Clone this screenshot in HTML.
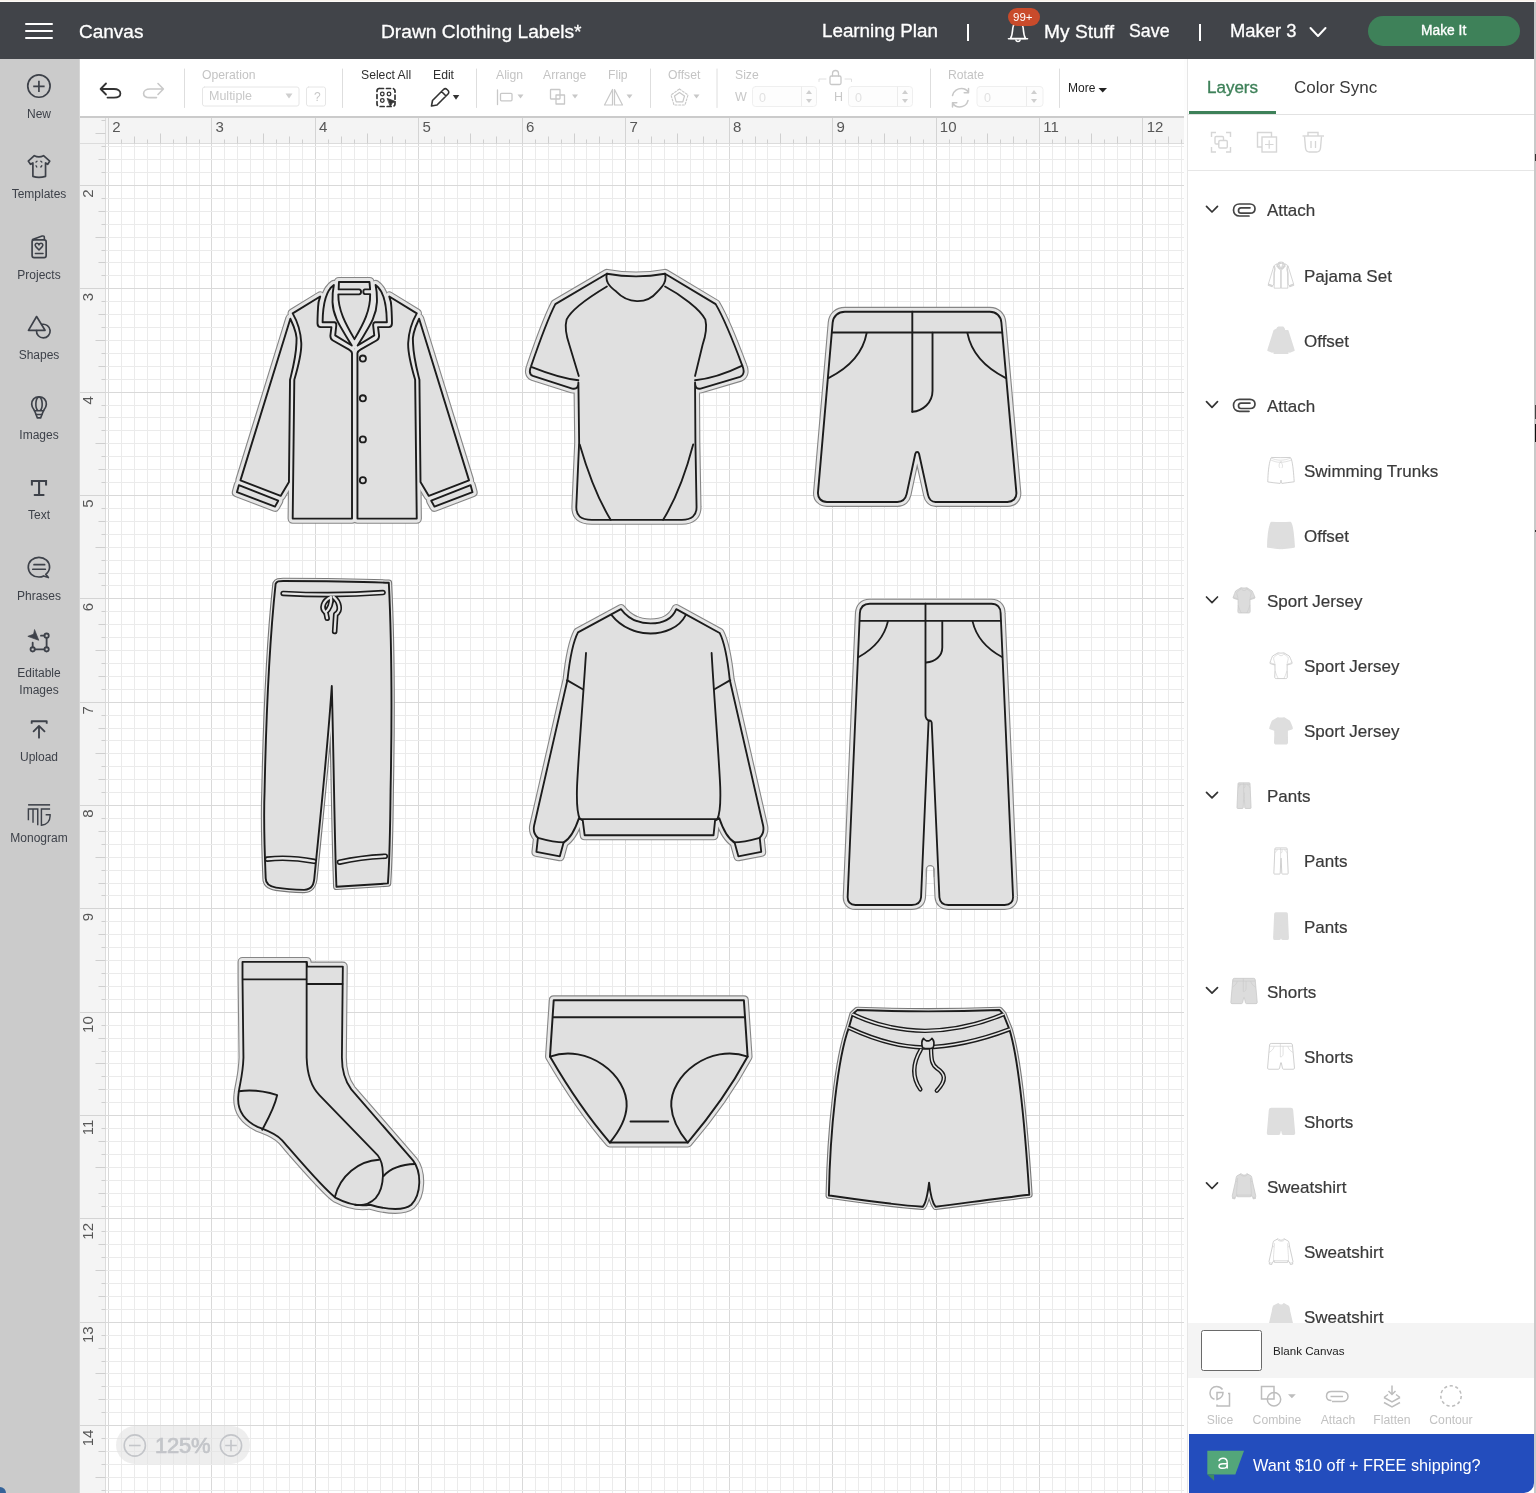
<!DOCTYPE html>
<html><head><meta charset="utf-8"><title>Canvas</title>
<style>
html,body{margin:0;padding:0;}
body{width:1536px;height:1493px;position:relative;overflow:hidden;background:#f8f3ec;font-family:"Liberation Sans",sans-serif;}
.a{position:absolute;}
.t{position:absolute;white-space:pre;will-change:transform;}
svg{position:absolute;overflow:visible;will-change:transform;}
</style></head><body>
<div class="a" style="left:0;top:1px;width:1536px;height:1px;background:#fdfbf8"></div><div class="a" style="left:0;top:2px;width:1534px;height:57.3px;background:#414449"></div><div class="a" style="left:1534px;top:2px;width:2px;height:1491px;background:#c9c9c9"></div><div class="a" style="left:25.4px;top:23.1px;width:27.3px;height:2px;border-radius:1px;background:#fff"></div><div class="a" style="left:25.4px;top:30.0px;width:27.3px;height:2px;border-radius:1px;background:#fff"></div><div class="a" style="left:25.4px;top:37.0px;width:27.3px;height:2px;border-radius:1px;background:#fff"></div><div class="t" style="left:79.0px;top:21.9px;font-size:19px;line-height:19px;color:#fff;font-weight:400;-webkit-text-stroke:0.3px #fff">Canvas</div>
<div class="t" style="left:380.5px;top:21.9px;font-size:19.2px;line-height:19.2px;color:#fff;font-weight:400;-webkit-text-stroke:0.3px #fff">Drawn Clothing Labels*</div>
<div class="t" style="left:822.2px;top:22.4px;font-size:18.8px;line-height:18.8px;color:#fff;font-weight:400;-webkit-text-stroke:0.3px #fff">Learning Plan</div>
<div class="a" style="left:967.4px;top:23.5px;width:2px;height:17.5px;background:#fff"></div><div class="a" style="left:1199.1px;top:23.5px;width:2px;height:17.5px;background:#fff"></div><svg style="left:1005px;top:18px" width="26" height="28" viewBox="0 0 26 28">
<path d="M5.5 20.5 C7.5 17 7.5 13 7.8 10 C8.3 6.5 10.5 4.5 13 4.5 C15.5 4.5 17.7 6.5 18.2 10 C18.5 13 18.5 17 20.5 20.5 Z" fill="none" stroke="#fff" stroke-width="1.6" stroke-linejoin="round"/>
<path d="M3.5 20.8 H22.5" stroke="#fff" stroke-width="1.6" stroke-linecap="round"/>
<path d="M10.8 21.5 C11 24 15 24 15.2 21.5" fill="none" stroke="#fff" stroke-width="1.5"/>
</svg><div class="a" style="left:1007.5px;top:8.1px;width:32px;height:18px;border-radius:9px;background:#c94b2b"></div><div class="t" style="left:1012.5px;top:11.9px;font-size:11.5px;line-height:11.5px;color:#fff;font-weight:400;">99+</div>
<div class="t" style="left:1044.3px;top:21.7px;font-size:19.2px;line-height:19.2px;color:#fff;font-weight:400;-webkit-text-stroke:0.3px #fff">My Stuff</div>
<div class="t" style="left:1128.7px;top:22.9px;font-size:17.8px;line-height:17.8px;color:#fff;font-weight:400;-webkit-text-stroke:0.3px #fff">Save</div>
<div class="t" style="left:1229.5px;top:22.2px;font-size:18.4px;line-height:18.4px;color:#fff;font-weight:400;-webkit-text-stroke:0.3px #fff">Maker 3</div>
<svg style="left:1308px;top:25px" width="20" height="14" viewBox="0 0 20 14"><path d="M2.5 3 L10 11 L17.5 3" fill="none" stroke="#fff" stroke-width="2" stroke-linecap="round" stroke-linejoin="round"/></svg><div class="a" style="left:1368px;top:15.8px;width:152px;height:30px;border-radius:15px;background:#3e8159"></div><div class="t" style="left:1420.8px;top:24.3px;font-size:13.8px;line-height:13.8px;color:#fff;font-weight:400;-webkit-text-stroke:0.35px #fff">Make It</div>
<div class="a" style="left:0;top:59px;width:79px;height:1434px;background:#cbcbcb"></div><div class="a" style="left:79px;top:59px;width:1px;height:1434px;background:#d6d6d6"></div><svg style="left:14px;top:66px" width="50" height="60" viewBox="0 0 1244 1493" fill="none" stroke="#3d4149" stroke-linecap="round" stroke-linejoin="round"><circle cx="620" cy="500" r="278" stroke-width="42"/><path d="M478 508 H762 M620 365 V645" stroke-width="42" stroke-linecap="butt"/></svg>
<div class="t" style="left:-21.0px;width:120px;text-align:center;top:107.8px;font-size:12px;line-height:12px;color:#3d4149;font-weight:400">New</div>

<svg style="left:14px;top:146px" width="50" height="60" viewBox="0 0 1244 1493" fill="none" stroke="#3d4149" stroke-linecap="round" stroke-linejoin="round"><path d="M505 240 C570 272 670 272 735 240 L890 375 L840 455 L785 420 V755 C690 785 550 785 470 755 V420 L410 455 L355 375 Z" stroke-width="42"/><path d="M548 398 L572 380 M668 380 L692 398 M548 492 L566 522 M692 492 L668 522" stroke-width="34"/></svg>
<div class="t" style="left:-21.0px;width:120px;text-align:center;top:188.3px;font-size:12px;line-height:12px;color:#3d4149;font-weight:400">Templates</div>

<svg style="left:14px;top:226px" width="50" height="60" viewBox="0 0 1244 1493" fill="none" stroke="#3d4149" stroke-linecap="round" stroke-linejoin="round"><rect x="450" y="345" width="350" height="440" rx="50" stroke-width="42"/><path d="M460 335 L700 250 C735 240 755 258 755 290 V335" stroke-width="40"/><path d="M622 595 L548 520 C508 478 528 432 572 432 C600 432 614 452 622 470 C630 452 644 432 672 432 C716 432 736 478 696 520 Z" stroke-width="38"/><path d="M532 685 H722" stroke-width="38"/></svg>
<div class="t" style="left:-21.0px;width:120px;text-align:center;top:268.5px;font-size:12px;line-height:12px;color:#3d4149;font-weight:400">Projects</div>

<svg style="left:14px;top:306px" width="50" height="60" viewBox="0 0 1244 1493" fill="none" stroke="#3d4149" stroke-linecap="round" stroke-linejoin="round"><path d="M562 262 L360 605 H772 Z" stroke-width="42"/><path d="M698 458 A170 170 0 1 1 560 612" stroke-width="42"/></svg>
<div class="t" style="left:-21.0px;width:120px;text-align:center;top:348.8px;font-size:12px;line-height:12px;color:#3d4149;font-weight:400">Shapes</div>

<svg style="left:14px;top:386px" width="50" height="60" viewBox="0 0 1244 1493" fill="none" stroke="#3d4149" stroke-linecap="round" stroke-linejoin="round"><path d="M622 268 C510 268 440 350 440 455 C440 525 480 570 510 610 L582 795 H662 L735 610 C765 570 805 525 805 455 C805 350 735 268 622 268 Z" stroke-width="42"/><path d="M610 275 C530 320 520 540 595 612 M635 275 C715 320 725 540 650 612 M505 615 H740 M552 710 H692" stroke-width="40"/></svg>
<div class="t" style="left:-21.0px;width:120px;text-align:center;top:429.1px;font-size:12px;line-height:12px;color:#3d4149;font-weight:400">Images</div>

<svg style="left:14px;top:466px" width="50" height="60" viewBox="0 0 1244 1493" fill="none" stroke="#3d4149" stroke-linecap="round" stroke-linejoin="round"><path d="M445 488 V372 H798 V488" stroke-width="50" stroke-linecap="butt" stroke-linejoin="miter"/><path d="M624 372 V722" stroke-width="52" stroke-linecap="butt"/><path d="M512 722 H738" stroke-width="46"/></svg>
<div class="t" style="left:-21.0px;width:120px;text-align:center;top:509.4px;font-size:12px;line-height:12px;color:#3d4149;font-weight:400">Text</div>

<svg style="left:14px;top:546px" width="50" height="60" viewBox="0 0 1244 1493" fill="none" stroke="#3d4149" stroke-linecap="round" stroke-linejoin="round"><path d="M790 705 C850 655 885 595 885 528 C885 385 768 285 620 285 C472 285 355 385 355 528 C355 670 472 772 620 772 C665 772 705 762 738 745 L855 785 Z" stroke-width="42"/><path d="M498 465 H762 M468 578 H780" stroke-width="42"/></svg>
<div class="t" style="left:-21.0px;width:120px;text-align:center;top:590.4px;font-size:12px;line-height:12px;color:#3d4149;font-weight:400">Phrases</div>

<svg style="left:4px;top:620px" width="70" height="80" viewBox="0 0 1306 1493" fill="none" stroke="#3d4149" stroke-linecap="round" stroke-linejoin="round"><path d="M572 185 L648 378 L445 305 L548 268 Z" fill="#3d4149" stroke-width="14"/><path d="M535 425 V510 M573 548 H755 M795 330 V510 M690 292 H755" stroke-width="34"/><circle cx="535" cy="548" r="40" stroke-width="34"/><circle cx="795" cy="548" r="40" stroke-width="34"/><circle cx="795" cy="292" r="40" stroke-width="34"/></svg>
<div class="t" style="left:-21.0px;width:120px;text-align:center;top:666.8px;font-size:12px;line-height:12px;color:#3d4149;font-weight:400">Editable</div>

<div class="t" style="left:-21.0px;width:120px;text-align:center;top:684.3px;font-size:12px;line-height:12px;color:#3d4149;font-weight:400">Images</div>

<svg style="left:4px;top:706px" width="70" height="144" viewBox="0 0 726 1493" fill="none" stroke="#3d4149" stroke-linecap="round" stroke-linejoin="round"><path d="M287 185 V158 H443 V185" stroke-width="19" stroke-linecap="butt"/><path d="M363 328 V210 M307 262 L363 206 L420 262" stroke-width="19"/></svg>
<div class="t" style="left:-21.0px;width:120px;text-align:center;top:750.8px;font-size:12px;line-height:12px;color:#3d4149;font-weight:400">Upload</div>

<svg style="left:4px;top:706px" width="70" height="144" viewBox="0 0 726 1493" fill="none" stroke="#3d4149" stroke-linecap="round" stroke-linejoin="round"><path d="M250 1025 H478" stroke-width="16" stroke-linecap="butt"/><path d="M253 1185 V1068 H350 V1236 M301 1068 V1210" stroke-width="15" stroke-linecap="butt" stroke-linejoin="miter"/><path d="M478 1068 H388 V1236 C445 1230 478 1190 478 1140 V1128 H432" stroke-width="15" stroke-linecap="butt" stroke-linejoin="miter"/></svg>
<div class="t" style="left:-21.0px;width:120px;text-align:center;top:831.5px;font-size:12px;line-height:12px;color:#3d4149;font-weight:400">Monogram</div>
<div class="a" style="left:80px;top:59px;width:1107px;height:57px;background:#fff"></div><div class="a" style="left:80px;top:116px;width:1104px;height:2px;background:#cbcbcb"></div><svg style="left:0;top:0" width="1536" height="130" viewBox="0 0 1536 130" fill="none" stroke-linecap="round" stroke-linejoin="round">
<path d="M106 83.5 L100.6 89 L106 94.5 M100.6 89 H114 C118 89 120.4 91 120.4 93.4 C120.4 96 118 97.6 114 97.6 H107.5" stroke="#333" stroke-width="1.8"/>
<path d="M158 83.5 L163.4 89 L158 94.5 M163.4 89 H150 C146 89 143.6 91 143.6 93.4 C143.6 96 146 97.6 150 97.6 H156.5" stroke="#c9c9c9" stroke-width="1.6"/>

<line x1="184.5" y1="69" x2="184.5" y2="107.5" stroke="#dedede" stroke-width="1"/>
<line x1="342.5" y1="69" x2="342.5" y2="107.5" stroke="#dedede" stroke-width="1"/>
<line x1="476.5" y1="69" x2="476.5" y2="107.5" stroke="#dedede" stroke-width="1"/>
<line x1="650.5" y1="69" x2="650.5" y2="107.5" stroke="#dedede" stroke-width="1"/>
<line x1="717" y1="69" x2="717" y2="107.5" stroke="#dedede" stroke-width="1"/>
<line x1="930.5" y1="69" x2="930.5" y2="107.5" stroke="#dedede" stroke-width="1"/>
<line x1="1059.5" y1="69" x2="1059.5" y2="107.5" stroke="#dedede" stroke-width="1"/>
<rect x="202.5" y="87" width="96.5" height="19" rx="2" stroke="#e6e6e6" stroke-width="1"/>
<path d="M285.5 93.5 H292.5 L289 98.5 Z" fill="#cfcfcf" stroke="none"/>
<rect x="306.5" y="87" width="19" height="19" rx="2" stroke="#e6e6e6" stroke-width="1"/>
<rect x="377" y="88.5" width="18" height="18" rx="2.5" stroke="#333" stroke-width="1.7" stroke-dasharray="4 3"/>
<circle cx="382.3" cy="94" r="1.8" stroke="#333" stroke-width="1.3"/><circle cx="389" cy="94" r="1.8" stroke="#333" stroke-width="1.3"/><circle cx="382.3" cy="100.5" r="1.8" stroke="#333" stroke-width="1.3"/>
<path d="M387.5 98.5 L395.5 101.5 L392 103 L390.5 106.5 Z" fill="#333" stroke="#333" stroke-width="0.8"/>
<path d="M431.5 106 L432.5 100.5 L443.5 89.5 C444.5 88.5 446 88.5 447 89.5 L448 90.5 C449 91.5 449 93 448 94 L437 105 Z M441.5 91.5 L446 96" stroke="#333" stroke-width="1.6"/>
<path d="M452.8 95 H459.3 L456 99.8 Z" fill="#333" stroke="none"/>
<path d="M497.5 90 V104.5" stroke="#c8c8c8" stroke-width="1.3"/><rect x="500.5" y="93.3" width="11.5" height="7.5" rx="1" stroke="#c8c8c8" stroke-width="1.3"/><path d="M517.5 94.5 H523.5 L520.5 98.5 Z" fill="#c8c8c8" stroke="none"/>
<rect x="550.5" y="89.5" width="9.5" height="9.5" rx="0.5" stroke="#c8c8c8" stroke-width="1.3"/><path d="M556 95 H564.5 V104 H556 Z" stroke="#c8c8c8" stroke-width="1.3"/><path d="M572 94.5 H578 L575 98.5 Z" fill="#c8c8c8" stroke="none"/>
<path d="M604.5 105 L612.5 89.5 V105 Z M614.5 89.5 L622.5 105 H614.5 Z" stroke="#c8c8c8" stroke-width="1.2"/><path d="M626.5 94.5 H632.5 L629.5 98.5 Z" fill="#c8c8c8" stroke="none"/>
<path d="M679.5 89 L688 95 L685 105 H674 L671 95 Z" stroke="#c8c8c8" stroke-width="1.1" stroke-dasharray="2 1.6"/><path d="M679.5 92.5 L684.5 96 L682.8 101.8 H676.2 L674.5 96 Z" stroke="#c8c8c8" stroke-width="1.2"/><path d="M693.5 94.5 H699.5 L696.5 98.5 Z" fill="#c8c8c8" stroke="none"/>
<rect x="752.5" y="86.5" width="64" height="20" rx="3" stroke="#efefef" stroke-width="1" fill="#fdfdfd"/>
<line x1="801.5" y1="87" x2="801.5" y2="106" stroke="#ececec" stroke-width="1"/>
<path d="M806.0 94 L809.0 90 L812.0 94 Z M806.0 99 L809.0 103 L812.0 99 Z" fill="#cfcfcf" stroke="none"/>
<rect x="848.5" y="86.5" width="64" height="20" rx="3" stroke="#efefef" stroke-width="1" fill="#fdfdfd"/>
<line x1="897.5" y1="87" x2="897.5" y2="106" stroke="#ececec" stroke-width="1"/>
<path d="M902.0 94 L905.0 90 L908.0 94 Z M902.0 99 L905.0 103 L908.0 99 Z" fill="#cfcfcf" stroke="none"/>
<rect x="977" y="86.5" width="66" height="20" rx="3" stroke="#efefef" stroke-width="1" fill="#fdfdfd"/><line x1="1026.5" y1="87" x2="1026.5" y2="106" stroke="#ececec" stroke-width="1"/><path d="M1031 94 L1034 90 L1037 94 Z M1031 99 L1034 103 L1037 99 Z" fill="#cfcfcf" stroke="none"/>
<rect x="830" y="76" width="11" height="8.5" rx="1.5" stroke="#c8c8c8" stroke-width="1.3"/><path d="M832.5 76 V73.5 C832.5 71.5 834 70.5 835.5 70.5 C837 70.5 838.5 71.5 838.5 73.5 V76" stroke="#c8c8c8" stroke-width="1.3"/><path d="M819 81.5 V79 H826 M845 79 H851.5 V81.5" stroke="#e0e0e0" stroke-width="1"/>
<path d="M952.5 95.5 C953.5 90.5 958 88.5 961.5 88.5 C964.5 88.5 967 90 968.5 92.5 M968.5 88.5 V92.8 H964.2 M968 100.5 C967 105 963 107 959.5 107 C956.5 107 954 105.5 952.5 103 M952.5 107 V102.7 H956.8" stroke="#c8c8c8" stroke-width="1.5"/>
<path d="M1098.5 88 H1107 L1102.7 92.6 Z" fill="#222" stroke="none"/>
</svg>
<div class="t" style="left:202.0px;top:69.3px;font-size:12.2px;line-height:12.2px;color:#c4c4c4;font-weight:400;">Operation</div>

<div class="t" style="left:360.5px;top:69.3px;font-size:12.2px;line-height:12.2px;color:#2f2f2f;font-weight:400;">Select All</div>

<div class="t" style="left:433.0px;top:69.3px;font-size:12.2px;line-height:12.2px;color:#2f2f2f;font-weight:400;">Edit</div>

<div class="t" style="left:496.0px;top:69.3px;font-size:12.2px;line-height:12.2px;color:#c4c4c4;font-weight:400;">Align</div>

<div class="t" style="left:542.5px;top:69.3px;font-size:12.2px;line-height:12.2px;color:#c4c4c4;font-weight:400;">Arrange</div>

<div class="t" style="left:607.5px;top:69.3px;font-size:12.2px;line-height:12.2px;color:#c4c4c4;font-weight:400;">Flip</div>

<div class="t" style="left:668.0px;top:69.3px;font-size:12.2px;line-height:12.2px;color:#c4c4c4;font-weight:400;">Offset</div>

<div class="t" style="left:734.5px;top:69.3px;font-size:12.2px;line-height:12.2px;color:#c4c4c4;font-weight:400;">Size</div>

<div class="t" style="left:948.0px;top:69.3px;font-size:12.2px;line-height:12.2px;color:#c4c4c4;font-weight:400;">Rotate</div>

<div class="t" style="left:209.0px;top:90.2px;font-size:12.5px;line-height:12.5px;color:#c8c8c8;font-weight:400;">Multiple</div>

<div class="t" style="left:313.5px;top:90.6px;font-size:12px;line-height:12px;color:#c8c8c8;font-weight:400;">?</div>

<div class="t" style="left:735.0px;top:91.4px;font-size:12.5px;line-height:12.5px;color:#c8c8c8;font-weight:400;">W</div>

<div class="t" style="left:834.0px;top:91.4px;font-size:12.5px;line-height:12.5px;color:#c8c8c8;font-weight:400;">H</div>

<div class="t" style="left:759.0px;top:91.7px;font-size:12.5px;line-height:12.5px;color:#e2e2e2;font-weight:400;">0</div>

<div class="t" style="left:855.0px;top:91.7px;font-size:12.5px;line-height:12.5px;color:#e2e2e2;font-weight:400;">0</div>

<div class="t" style="left:984.0px;top:91.7px;font-size:12.5px;line-height:12.5px;color:#e2e2e2;font-weight:400;">0</div>

<div class="t" style="left:1067.5px;top:82.3px;font-size:12px;line-height:12px;color:#222;font-weight:400;">More</div>
<div class="a" style="left:80px;top:118px;width:1104px;height:1375px;background:#fff"></div>
<svg style="left:0;top:0" width="1536" height="1493" viewBox="0 0 1536 1493">
<line x1="108.5" y1="143.5" x2="108.5" y2="1493" stroke="#d9d9d9" stroke-width="1"/>
<line x1="121.5" y1="143.5" x2="121.5" y2="1493" stroke="#ebebeb" stroke-width="1"/>
<line x1="134.5" y1="143.5" x2="134.5" y2="1493" stroke="#ebebeb" stroke-width="1"/>
<line x1="147.5" y1="143.5" x2="147.5" y2="1493" stroke="#ebebeb" stroke-width="1"/>
<line x1="160.5" y1="143.5" x2="160.5" y2="1493" stroke="#ebebeb" stroke-width="1"/>
<line x1="173.5" y1="143.5" x2="173.5" y2="1493" stroke="#ebebeb" stroke-width="1"/>
<line x1="186.5" y1="143.5" x2="186.5" y2="1493" stroke="#ebebeb" stroke-width="1"/>
<line x1="199.5" y1="143.5" x2="199.5" y2="1493" stroke="#ebebeb" stroke-width="1"/>
<line x1="211.5" y1="143.5" x2="211.5" y2="1493" stroke="#d9d9d9" stroke-width="1"/>
<line x1="224.5" y1="143.5" x2="224.5" y2="1493" stroke="#ebebeb" stroke-width="1"/>
<line x1="237.5" y1="143.5" x2="237.5" y2="1493" stroke="#ebebeb" stroke-width="1"/>
<line x1="250.5" y1="143.5" x2="250.5" y2="1493" stroke="#ebebeb" stroke-width="1"/>
<line x1="263.5" y1="143.5" x2="263.5" y2="1493" stroke="#ebebeb" stroke-width="1"/>
<line x1="276.5" y1="143.5" x2="276.5" y2="1493" stroke="#ebebeb" stroke-width="1"/>
<line x1="289.5" y1="143.5" x2="289.5" y2="1493" stroke="#ebebeb" stroke-width="1"/>
<line x1="302.5" y1="143.5" x2="302.5" y2="1493" stroke="#ebebeb" stroke-width="1"/>
<line x1="315.5" y1="143.5" x2="315.5" y2="1493" stroke="#d9d9d9" stroke-width="1"/>
<line x1="328.5" y1="143.5" x2="328.5" y2="1493" stroke="#ebebeb" stroke-width="1"/>
<line x1="341.5" y1="143.5" x2="341.5" y2="1493" stroke="#ebebeb" stroke-width="1"/>
<line x1="354.5" y1="143.5" x2="354.5" y2="1493" stroke="#ebebeb" stroke-width="1"/>
<line x1="367.5" y1="143.5" x2="367.5" y2="1493" stroke="#ebebeb" stroke-width="1"/>
<line x1="380.5" y1="143.5" x2="380.5" y2="1493" stroke="#ebebeb" stroke-width="1"/>
<line x1="392.5" y1="143.5" x2="392.5" y2="1493" stroke="#ebebeb" stroke-width="1"/>
<line x1="405.5" y1="143.5" x2="405.5" y2="1493" stroke="#ebebeb" stroke-width="1"/>
<line x1="418.5" y1="143.5" x2="418.5" y2="1493" stroke="#d9d9d9" stroke-width="1"/>
<line x1="431.5" y1="143.5" x2="431.5" y2="1493" stroke="#ebebeb" stroke-width="1"/>
<line x1="444.5" y1="143.5" x2="444.5" y2="1493" stroke="#ebebeb" stroke-width="1"/>
<line x1="457.5" y1="143.5" x2="457.5" y2="1493" stroke="#ebebeb" stroke-width="1"/>
<line x1="470.5" y1="143.5" x2="470.5" y2="1493" stroke="#ebebeb" stroke-width="1"/>
<line x1="483.5" y1="143.5" x2="483.5" y2="1493" stroke="#ebebeb" stroke-width="1"/>
<line x1="496.5" y1="143.5" x2="496.5" y2="1493" stroke="#ebebeb" stroke-width="1"/>
<line x1="509.5" y1="143.5" x2="509.5" y2="1493" stroke="#ebebeb" stroke-width="1"/>
<line x1="522.5" y1="143.5" x2="522.5" y2="1493" stroke="#d9d9d9" stroke-width="1"/>
<line x1="535.5" y1="143.5" x2="535.5" y2="1493" stroke="#ebebeb" stroke-width="1"/>
<line x1="548.5" y1="143.5" x2="548.5" y2="1493" stroke="#ebebeb" stroke-width="1"/>
<line x1="561.5" y1="143.5" x2="561.5" y2="1493" stroke="#ebebeb" stroke-width="1"/>
<line x1="574.5" y1="143.5" x2="574.5" y2="1493" stroke="#ebebeb" stroke-width="1"/>
<line x1="586.5" y1="143.5" x2="586.5" y2="1493" stroke="#ebebeb" stroke-width="1"/>
<line x1="599.5" y1="143.5" x2="599.5" y2="1493" stroke="#ebebeb" stroke-width="1"/>
<line x1="612.5" y1="143.5" x2="612.5" y2="1493" stroke="#ebebeb" stroke-width="1"/>
<line x1="625.5" y1="143.5" x2="625.5" y2="1493" stroke="#d9d9d9" stroke-width="1"/>
<line x1="638.5" y1="143.5" x2="638.5" y2="1493" stroke="#ebebeb" stroke-width="1"/>
<line x1="651.5" y1="143.5" x2="651.5" y2="1493" stroke="#ebebeb" stroke-width="1"/>
<line x1="664.5" y1="143.5" x2="664.5" y2="1493" stroke="#ebebeb" stroke-width="1"/>
<line x1="677.5" y1="143.5" x2="677.5" y2="1493" stroke="#ebebeb" stroke-width="1"/>
<line x1="690.5" y1="143.5" x2="690.5" y2="1493" stroke="#ebebeb" stroke-width="1"/>
<line x1="703.5" y1="143.5" x2="703.5" y2="1493" stroke="#ebebeb" stroke-width="1"/>
<line x1="716.5" y1="143.5" x2="716.5" y2="1493" stroke="#ebebeb" stroke-width="1"/>
<line x1="729.5" y1="143.5" x2="729.5" y2="1493" stroke="#d9d9d9" stroke-width="1"/>
<line x1="742.5" y1="143.5" x2="742.5" y2="1493" stroke="#ebebeb" stroke-width="1"/>
<line x1="755.5" y1="143.5" x2="755.5" y2="1493" stroke="#ebebeb" stroke-width="1"/>
<line x1="767.5" y1="143.5" x2="767.5" y2="1493" stroke="#ebebeb" stroke-width="1"/>
<line x1="780.5" y1="143.5" x2="780.5" y2="1493" stroke="#ebebeb" stroke-width="1"/>
<line x1="793.5" y1="143.5" x2="793.5" y2="1493" stroke="#ebebeb" stroke-width="1"/>
<line x1="806.5" y1="143.5" x2="806.5" y2="1493" stroke="#ebebeb" stroke-width="1"/>
<line x1="819.5" y1="143.5" x2="819.5" y2="1493" stroke="#ebebeb" stroke-width="1"/>
<line x1="832.5" y1="143.5" x2="832.5" y2="1493" stroke="#d9d9d9" stroke-width="1"/>
<line x1="845.5" y1="143.5" x2="845.5" y2="1493" stroke="#ebebeb" stroke-width="1"/>
<line x1="858.5" y1="143.5" x2="858.5" y2="1493" stroke="#ebebeb" stroke-width="1"/>
<line x1="871.5" y1="143.5" x2="871.5" y2="1493" stroke="#ebebeb" stroke-width="1"/>
<line x1="884.5" y1="143.5" x2="884.5" y2="1493" stroke="#ebebeb" stroke-width="1"/>
<line x1="897.5" y1="143.5" x2="897.5" y2="1493" stroke="#ebebeb" stroke-width="1"/>
<line x1="910.5" y1="143.5" x2="910.5" y2="1493" stroke="#ebebeb" stroke-width="1"/>
<line x1="923.5" y1="143.5" x2="923.5" y2="1493" stroke="#ebebeb" stroke-width="1"/>
<line x1="936.5" y1="143.5" x2="936.5" y2="1493" stroke="#d9d9d9" stroke-width="1"/>
<line x1="949.5" y1="143.5" x2="949.5" y2="1493" stroke="#ebebeb" stroke-width="1"/>
<line x1="961.5" y1="143.5" x2="961.5" y2="1493" stroke="#ebebeb" stroke-width="1"/>
<line x1="974.5" y1="143.5" x2="974.5" y2="1493" stroke="#ebebeb" stroke-width="1"/>
<line x1="987.5" y1="143.5" x2="987.5" y2="1493" stroke="#ebebeb" stroke-width="1"/>
<line x1="1000.5" y1="143.5" x2="1000.5" y2="1493" stroke="#ebebeb" stroke-width="1"/>
<line x1="1013.5" y1="143.5" x2="1013.5" y2="1493" stroke="#ebebeb" stroke-width="1"/>
<line x1="1026.5" y1="143.5" x2="1026.5" y2="1493" stroke="#ebebeb" stroke-width="1"/>
<line x1="1039.5" y1="143.5" x2="1039.5" y2="1493" stroke="#d9d9d9" stroke-width="1"/>
<line x1="1052.5" y1="143.5" x2="1052.5" y2="1493" stroke="#ebebeb" stroke-width="1"/>
<line x1="1065.5" y1="143.5" x2="1065.5" y2="1493" stroke="#ebebeb" stroke-width="1"/>
<line x1="1078.5" y1="143.5" x2="1078.5" y2="1493" stroke="#ebebeb" stroke-width="1"/>
<line x1="1091.5" y1="143.5" x2="1091.5" y2="1493" stroke="#ebebeb" stroke-width="1"/>
<line x1="1104.5" y1="143.5" x2="1104.5" y2="1493" stroke="#ebebeb" stroke-width="1"/>
<line x1="1117.5" y1="143.5" x2="1117.5" y2="1493" stroke="#ebebeb" stroke-width="1"/>
<line x1="1130.5" y1="143.5" x2="1130.5" y2="1493" stroke="#ebebeb" stroke-width="1"/>
<line x1="1142.5" y1="143.5" x2="1142.5" y2="1493" stroke="#d9d9d9" stroke-width="1"/>
<line x1="1155.5" y1="143.5" x2="1155.5" y2="1493" stroke="#ebebeb" stroke-width="1"/>
<line x1="1168.5" y1="143.5" x2="1168.5" y2="1493" stroke="#ebebeb" stroke-width="1"/>
<line x1="1181.5" y1="143.5" x2="1181.5" y2="1493" stroke="#ebebeb" stroke-width="1"/>
<line x1="105.5" y1="146.5" x2="1184" y2="146.5" stroke="#ebebeb" stroke-width="1"/>
<line x1="105.5" y1="159.5" x2="1184" y2="159.5" stroke="#ebebeb" stroke-width="1"/>
<line x1="105.5" y1="172.5" x2="1184" y2="172.5" stroke="#ebebeb" stroke-width="1"/>
<line x1="105.5" y1="185.5" x2="1184" y2="185.5" stroke="#d9d9d9" stroke-width="1"/>
<line x1="105.5" y1="198.5" x2="1184" y2="198.5" stroke="#ebebeb" stroke-width="1"/>
<line x1="105.5" y1="211.5" x2="1184" y2="211.5" stroke="#ebebeb" stroke-width="1"/>
<line x1="105.5" y1="224.5" x2="1184" y2="224.5" stroke="#ebebeb" stroke-width="1"/>
<line x1="105.5" y1="237.5" x2="1184" y2="237.5" stroke="#ebebeb" stroke-width="1"/>
<line x1="105.5" y1="250.5" x2="1184" y2="250.5" stroke="#ebebeb" stroke-width="1"/>
<line x1="105.5" y1="262.5" x2="1184" y2="262.5" stroke="#ebebeb" stroke-width="1"/>
<line x1="105.5" y1="275.5" x2="1184" y2="275.5" stroke="#ebebeb" stroke-width="1"/>
<line x1="105.5" y1="288.5" x2="1184" y2="288.5" stroke="#d9d9d9" stroke-width="1"/>
<line x1="105.5" y1="301.5" x2="1184" y2="301.5" stroke="#ebebeb" stroke-width="1"/>
<line x1="105.5" y1="314.5" x2="1184" y2="314.5" stroke="#ebebeb" stroke-width="1"/>
<line x1="105.5" y1="327.5" x2="1184" y2="327.5" stroke="#ebebeb" stroke-width="1"/>
<line x1="105.5" y1="340.5" x2="1184" y2="340.5" stroke="#ebebeb" stroke-width="1"/>
<line x1="105.5" y1="353.5" x2="1184" y2="353.5" stroke="#ebebeb" stroke-width="1"/>
<line x1="105.5" y1="366.5" x2="1184" y2="366.5" stroke="#ebebeb" stroke-width="1"/>
<line x1="105.5" y1="379.5" x2="1184" y2="379.5" stroke="#ebebeb" stroke-width="1"/>
<line x1="105.5" y1="392.5" x2="1184" y2="392.5" stroke="#d9d9d9" stroke-width="1"/>
<line x1="105.5" y1="405.5" x2="1184" y2="405.5" stroke="#ebebeb" stroke-width="1"/>
<line x1="105.5" y1="417.5" x2="1184" y2="417.5" stroke="#ebebeb" stroke-width="1"/>
<line x1="105.5" y1="430.5" x2="1184" y2="430.5" stroke="#ebebeb" stroke-width="1"/>
<line x1="105.5" y1="443.5" x2="1184" y2="443.5" stroke="#ebebeb" stroke-width="1"/>
<line x1="105.5" y1="456.5" x2="1184" y2="456.5" stroke="#ebebeb" stroke-width="1"/>
<line x1="105.5" y1="469.5" x2="1184" y2="469.5" stroke="#ebebeb" stroke-width="1"/>
<line x1="105.5" y1="482.5" x2="1184" y2="482.5" stroke="#ebebeb" stroke-width="1"/>
<line x1="105.5" y1="495.5" x2="1184" y2="495.5" stroke="#d9d9d9" stroke-width="1"/>
<line x1="105.5" y1="508.5" x2="1184" y2="508.5" stroke="#ebebeb" stroke-width="1"/>
<line x1="105.5" y1="521.5" x2="1184" y2="521.5" stroke="#ebebeb" stroke-width="1"/>
<line x1="105.5" y1="534.5" x2="1184" y2="534.5" stroke="#ebebeb" stroke-width="1"/>
<line x1="105.5" y1="547.5" x2="1184" y2="547.5" stroke="#ebebeb" stroke-width="1"/>
<line x1="105.5" y1="560.5" x2="1184" y2="560.5" stroke="#ebebeb" stroke-width="1"/>
<line x1="105.5" y1="573.5" x2="1184" y2="573.5" stroke="#ebebeb" stroke-width="1"/>
<line x1="105.5" y1="585.5" x2="1184" y2="585.5" stroke="#ebebeb" stroke-width="1"/>
<line x1="105.5" y1="598.5" x2="1184" y2="598.5" stroke="#d9d9d9" stroke-width="1"/>
<line x1="105.5" y1="611.5" x2="1184" y2="611.5" stroke="#ebebeb" stroke-width="1"/>
<line x1="105.5" y1="624.5" x2="1184" y2="624.5" stroke="#ebebeb" stroke-width="1"/>
<line x1="105.5" y1="637.5" x2="1184" y2="637.5" stroke="#ebebeb" stroke-width="1"/>
<line x1="105.5" y1="650.5" x2="1184" y2="650.5" stroke="#ebebeb" stroke-width="1"/>
<line x1="105.5" y1="663.5" x2="1184" y2="663.5" stroke="#ebebeb" stroke-width="1"/>
<line x1="105.5" y1="676.5" x2="1184" y2="676.5" stroke="#ebebeb" stroke-width="1"/>
<line x1="105.5" y1="689.5" x2="1184" y2="689.5" stroke="#ebebeb" stroke-width="1"/>
<line x1="105.5" y1="702.5" x2="1184" y2="702.5" stroke="#d9d9d9" stroke-width="1"/>
<line x1="105.5" y1="715.5" x2="1184" y2="715.5" stroke="#ebebeb" stroke-width="1"/>
<line x1="105.5" y1="728.5" x2="1184" y2="728.5" stroke="#ebebeb" stroke-width="1"/>
<line x1="105.5" y1="740.5" x2="1184" y2="740.5" stroke="#ebebeb" stroke-width="1"/>
<line x1="105.5" y1="753.5" x2="1184" y2="753.5" stroke="#ebebeb" stroke-width="1"/>
<line x1="105.5" y1="766.5" x2="1184" y2="766.5" stroke="#ebebeb" stroke-width="1"/>
<line x1="105.5" y1="779.5" x2="1184" y2="779.5" stroke="#ebebeb" stroke-width="1"/>
<line x1="105.5" y1="792.5" x2="1184" y2="792.5" stroke="#ebebeb" stroke-width="1"/>
<line x1="105.5" y1="805.5" x2="1184" y2="805.5" stroke="#d9d9d9" stroke-width="1"/>
<line x1="105.5" y1="818.5" x2="1184" y2="818.5" stroke="#ebebeb" stroke-width="1"/>
<line x1="105.5" y1="831.5" x2="1184" y2="831.5" stroke="#ebebeb" stroke-width="1"/>
<line x1="105.5" y1="844.5" x2="1184" y2="844.5" stroke="#ebebeb" stroke-width="1"/>
<line x1="105.5" y1="857.5" x2="1184" y2="857.5" stroke="#ebebeb" stroke-width="1"/>
<line x1="105.5" y1="870.5" x2="1184" y2="870.5" stroke="#ebebeb" stroke-width="1"/>
<line x1="105.5" y1="883.5" x2="1184" y2="883.5" stroke="#ebebeb" stroke-width="1"/>
<line x1="105.5" y1="895.5" x2="1184" y2="895.5" stroke="#ebebeb" stroke-width="1"/>
<line x1="105.5" y1="908.5" x2="1184" y2="908.5" stroke="#d9d9d9" stroke-width="1"/>
<line x1="105.5" y1="921.5" x2="1184" y2="921.5" stroke="#ebebeb" stroke-width="1"/>
<line x1="105.5" y1="934.5" x2="1184" y2="934.5" stroke="#ebebeb" stroke-width="1"/>
<line x1="105.5" y1="947.5" x2="1184" y2="947.5" stroke="#ebebeb" stroke-width="1"/>
<line x1="105.5" y1="960.5" x2="1184" y2="960.5" stroke="#ebebeb" stroke-width="1"/>
<line x1="105.5" y1="973.5" x2="1184" y2="973.5" stroke="#ebebeb" stroke-width="1"/>
<line x1="105.5" y1="986.5" x2="1184" y2="986.5" stroke="#ebebeb" stroke-width="1"/>
<line x1="105.5" y1="999.5" x2="1184" y2="999.5" stroke="#ebebeb" stroke-width="1"/>
<line x1="105.5" y1="1012.5" x2="1184" y2="1012.5" stroke="#d9d9d9" stroke-width="1"/>
<line x1="105.5" y1="1025.5" x2="1184" y2="1025.5" stroke="#ebebeb" stroke-width="1"/>
<line x1="105.5" y1="1038.5" x2="1184" y2="1038.5" stroke="#ebebeb" stroke-width="1"/>
<line x1="105.5" y1="1051.5" x2="1184" y2="1051.5" stroke="#ebebeb" stroke-width="1"/>
<line x1="105.5" y1="1063.5" x2="1184" y2="1063.5" stroke="#ebebeb" stroke-width="1"/>
<line x1="105.5" y1="1076.5" x2="1184" y2="1076.5" stroke="#ebebeb" stroke-width="1"/>
<line x1="105.5" y1="1089.5" x2="1184" y2="1089.5" stroke="#ebebeb" stroke-width="1"/>
<line x1="105.5" y1="1102.5" x2="1184" y2="1102.5" stroke="#ebebeb" stroke-width="1"/>
<line x1="105.5" y1="1115.5" x2="1184" y2="1115.5" stroke="#d9d9d9" stroke-width="1"/>
<line x1="105.5" y1="1128.5" x2="1184" y2="1128.5" stroke="#ebebeb" stroke-width="1"/>
<line x1="105.5" y1="1141.5" x2="1184" y2="1141.5" stroke="#ebebeb" stroke-width="1"/>
<line x1="105.5" y1="1154.5" x2="1184" y2="1154.5" stroke="#ebebeb" stroke-width="1"/>
<line x1="105.5" y1="1167.5" x2="1184" y2="1167.5" stroke="#ebebeb" stroke-width="1"/>
<line x1="105.5" y1="1180.5" x2="1184" y2="1180.5" stroke="#ebebeb" stroke-width="1"/>
<line x1="105.5" y1="1193.5" x2="1184" y2="1193.5" stroke="#ebebeb" stroke-width="1"/>
<line x1="105.5" y1="1206.5" x2="1184" y2="1206.5" stroke="#ebebeb" stroke-width="1"/>
<line x1="105.5" y1="1218.5" x2="1184" y2="1218.5" stroke="#d9d9d9" stroke-width="1"/>
<line x1="105.5" y1="1231.5" x2="1184" y2="1231.5" stroke="#ebebeb" stroke-width="1"/>
<line x1="105.5" y1="1244.5" x2="1184" y2="1244.5" stroke="#ebebeb" stroke-width="1"/>
<line x1="105.5" y1="1257.5" x2="1184" y2="1257.5" stroke="#ebebeb" stroke-width="1"/>
<line x1="105.5" y1="1270.5" x2="1184" y2="1270.5" stroke="#ebebeb" stroke-width="1"/>
<line x1="105.5" y1="1283.5" x2="1184" y2="1283.5" stroke="#ebebeb" stroke-width="1"/>
<line x1="105.5" y1="1296.5" x2="1184" y2="1296.5" stroke="#ebebeb" stroke-width="1"/>
<line x1="105.5" y1="1309.5" x2="1184" y2="1309.5" stroke="#ebebeb" stroke-width="1"/>
<line x1="105.5" y1="1322.5" x2="1184" y2="1322.5" stroke="#d9d9d9" stroke-width="1"/>
<line x1="105.5" y1="1335.5" x2="1184" y2="1335.5" stroke="#ebebeb" stroke-width="1"/>
<line x1="105.5" y1="1348.5" x2="1184" y2="1348.5" stroke="#ebebeb" stroke-width="1"/>
<line x1="105.5" y1="1361.5" x2="1184" y2="1361.5" stroke="#ebebeb" stroke-width="1"/>
<line x1="105.5" y1="1373.5" x2="1184" y2="1373.5" stroke="#ebebeb" stroke-width="1"/>
<line x1="105.5" y1="1386.5" x2="1184" y2="1386.5" stroke="#ebebeb" stroke-width="1"/>
<line x1="105.5" y1="1399.5" x2="1184" y2="1399.5" stroke="#ebebeb" stroke-width="1"/>
<line x1="105.5" y1="1412.5" x2="1184" y2="1412.5" stroke="#ebebeb" stroke-width="1"/>
<line x1="105.5" y1="1425.5" x2="1184" y2="1425.5" stroke="#d9d9d9" stroke-width="1"/>
<line x1="105.5" y1="1438.5" x2="1184" y2="1438.5" stroke="#ebebeb" stroke-width="1"/>
<line x1="105.5" y1="1451.5" x2="1184" y2="1451.5" stroke="#ebebeb" stroke-width="1"/>
<line x1="105.5" y1="1464.5" x2="1184" y2="1464.5" stroke="#ebebeb" stroke-width="1"/>
<line x1="105.5" y1="1477.5" x2="1184" y2="1477.5" stroke="#ebebeb" stroke-width="1"/>
<line x1="105.5" y1="1490.5" x2="1184" y2="1490.5" stroke="#ebebeb" stroke-width="1"/>
<rect x="80" y="118" width="1104" height="25.5" fill="#f4f4f4"/>
<rect x="80" y="118" width="25.5" height="1375" fill="#f4f4f4"/>
<line x1="80" y1="143.5" x2="1184" y2="143.5" stroke="#dcdcdc" stroke-width="1"/>
<line x1="105.5" y1="118" x2="105.5" y2="1493" stroke="#dcdcdc" stroke-width="1"/>
<line x1="108.5" y1="118" x2="108.5" y2="143.5" stroke="#d4d4d4" stroke-width="1"/>
<text x="112.2" y="132.3" font-family="Liberation Sans" font-size="15" fill="#575757">2</text>
<line x1="121.5" y1="139.5" x2="121.5" y2="143.5" stroke="#cfcfcf" stroke-width="1"/>
<line x1="134.5" y1="136.5" x2="134.5" y2="143.5" stroke="#cfcfcf" stroke-width="1"/>
<line x1="147.5" y1="139.5" x2="147.5" y2="143.5" stroke="#cfcfcf" stroke-width="1"/>
<line x1="160.5" y1="133.5" x2="160.5" y2="143.5" stroke="#cfcfcf" stroke-width="1"/>
<line x1="173.5" y1="139.5" x2="173.5" y2="143.5" stroke="#cfcfcf" stroke-width="1"/>
<line x1="186.5" y1="136.5" x2="186.5" y2="143.5" stroke="#cfcfcf" stroke-width="1"/>
<line x1="199.5" y1="139.5" x2="199.5" y2="143.5" stroke="#cfcfcf" stroke-width="1"/>
<line x1="211.5" y1="118" x2="211.5" y2="143.5" stroke="#d4d4d4" stroke-width="1"/>
<text x="215.6" y="132.3" font-family="Liberation Sans" font-size="15" fill="#575757">3</text>
<line x1="224.5" y1="139.5" x2="224.5" y2="143.5" stroke="#cfcfcf" stroke-width="1"/>
<line x1="237.5" y1="136.5" x2="237.5" y2="143.5" stroke="#cfcfcf" stroke-width="1"/>
<line x1="250.5" y1="139.5" x2="250.5" y2="143.5" stroke="#cfcfcf" stroke-width="1"/>
<line x1="263.5" y1="133.5" x2="263.5" y2="143.5" stroke="#cfcfcf" stroke-width="1"/>
<line x1="276.5" y1="139.5" x2="276.5" y2="143.5" stroke="#cfcfcf" stroke-width="1"/>
<line x1="289.5" y1="136.5" x2="289.5" y2="143.5" stroke="#cfcfcf" stroke-width="1"/>
<line x1="302.5" y1="139.5" x2="302.5" y2="143.5" stroke="#cfcfcf" stroke-width="1"/>
<line x1="315.5" y1="118" x2="315.5" y2="143.5" stroke="#d4d4d4" stroke-width="1"/>
<text x="319.1" y="132.3" font-family="Liberation Sans" font-size="15" fill="#575757">4</text>
<line x1="328.5" y1="139.5" x2="328.5" y2="143.5" stroke="#cfcfcf" stroke-width="1"/>
<line x1="341.5" y1="136.5" x2="341.5" y2="143.5" stroke="#cfcfcf" stroke-width="1"/>
<line x1="354.5" y1="139.5" x2="354.5" y2="143.5" stroke="#cfcfcf" stroke-width="1"/>
<line x1="367.5" y1="133.5" x2="367.5" y2="143.5" stroke="#cfcfcf" stroke-width="1"/>
<line x1="380.5" y1="139.5" x2="380.5" y2="143.5" stroke="#cfcfcf" stroke-width="1"/>
<line x1="392.5" y1="136.5" x2="392.5" y2="143.5" stroke="#cfcfcf" stroke-width="1"/>
<line x1="405.5" y1="139.5" x2="405.5" y2="143.5" stroke="#cfcfcf" stroke-width="1"/>
<line x1="418.5" y1="118" x2="418.5" y2="143.5" stroke="#d4d4d4" stroke-width="1"/>
<text x="422.6" y="132.3" font-family="Liberation Sans" font-size="15" fill="#575757">5</text>
<line x1="431.5" y1="139.5" x2="431.5" y2="143.5" stroke="#cfcfcf" stroke-width="1"/>
<line x1="444.5" y1="136.5" x2="444.5" y2="143.5" stroke="#cfcfcf" stroke-width="1"/>
<line x1="457.5" y1="139.5" x2="457.5" y2="143.5" stroke="#cfcfcf" stroke-width="1"/>
<line x1="470.5" y1="133.5" x2="470.5" y2="143.5" stroke="#cfcfcf" stroke-width="1"/>
<line x1="483.5" y1="139.5" x2="483.5" y2="143.5" stroke="#cfcfcf" stroke-width="1"/>
<line x1="496.5" y1="136.5" x2="496.5" y2="143.5" stroke="#cfcfcf" stroke-width="1"/>
<line x1="509.5" y1="139.5" x2="509.5" y2="143.5" stroke="#cfcfcf" stroke-width="1"/>
<line x1="522.5" y1="118" x2="522.5" y2="143.5" stroke="#d4d4d4" stroke-width="1"/>
<text x="526.0" y="132.3" font-family="Liberation Sans" font-size="15" fill="#575757">6</text>
<line x1="535.5" y1="139.5" x2="535.5" y2="143.5" stroke="#cfcfcf" stroke-width="1"/>
<line x1="548.5" y1="136.5" x2="548.5" y2="143.5" stroke="#cfcfcf" stroke-width="1"/>
<line x1="561.5" y1="139.5" x2="561.5" y2="143.5" stroke="#cfcfcf" stroke-width="1"/>
<line x1="574.5" y1="133.5" x2="574.5" y2="143.5" stroke="#cfcfcf" stroke-width="1"/>
<line x1="586.5" y1="139.5" x2="586.5" y2="143.5" stroke="#cfcfcf" stroke-width="1"/>
<line x1="599.5" y1="136.5" x2="599.5" y2="143.5" stroke="#cfcfcf" stroke-width="1"/>
<line x1="612.5" y1="139.5" x2="612.5" y2="143.5" stroke="#cfcfcf" stroke-width="1"/>
<line x1="625.5" y1="118" x2="625.5" y2="143.5" stroke="#d4d4d4" stroke-width="1"/>
<text x="629.5" y="132.3" font-family="Liberation Sans" font-size="15" fill="#575757">7</text>
<line x1="638.5" y1="139.5" x2="638.5" y2="143.5" stroke="#cfcfcf" stroke-width="1"/>
<line x1="651.5" y1="136.5" x2="651.5" y2="143.5" stroke="#cfcfcf" stroke-width="1"/>
<line x1="664.5" y1="139.5" x2="664.5" y2="143.5" stroke="#cfcfcf" stroke-width="1"/>
<line x1="677.5" y1="133.5" x2="677.5" y2="143.5" stroke="#cfcfcf" stroke-width="1"/>
<line x1="690.5" y1="139.5" x2="690.5" y2="143.5" stroke="#cfcfcf" stroke-width="1"/>
<line x1="703.5" y1="136.5" x2="703.5" y2="143.5" stroke="#cfcfcf" stroke-width="1"/>
<line x1="716.5" y1="139.5" x2="716.5" y2="143.5" stroke="#cfcfcf" stroke-width="1"/>
<line x1="729.5" y1="118" x2="729.5" y2="143.5" stroke="#d4d4d4" stroke-width="1"/>
<text x="732.9" y="132.3" font-family="Liberation Sans" font-size="15" fill="#575757">8</text>
<line x1="742.5" y1="139.5" x2="742.5" y2="143.5" stroke="#cfcfcf" stroke-width="1"/>
<line x1="755.5" y1="136.5" x2="755.5" y2="143.5" stroke="#cfcfcf" stroke-width="1"/>
<line x1="767.5" y1="139.5" x2="767.5" y2="143.5" stroke="#cfcfcf" stroke-width="1"/>
<line x1="780.5" y1="133.5" x2="780.5" y2="143.5" stroke="#cfcfcf" stroke-width="1"/>
<line x1="793.5" y1="139.5" x2="793.5" y2="143.5" stroke="#cfcfcf" stroke-width="1"/>
<line x1="806.5" y1="136.5" x2="806.5" y2="143.5" stroke="#cfcfcf" stroke-width="1"/>
<line x1="819.5" y1="139.5" x2="819.5" y2="143.5" stroke="#cfcfcf" stroke-width="1"/>
<line x1="832.5" y1="118" x2="832.5" y2="143.5" stroke="#d4d4d4" stroke-width="1"/>
<text x="836.4" y="132.3" font-family="Liberation Sans" font-size="15" fill="#575757">9</text>
<line x1="845.5" y1="139.5" x2="845.5" y2="143.5" stroke="#cfcfcf" stroke-width="1"/>
<line x1="858.5" y1="136.5" x2="858.5" y2="143.5" stroke="#cfcfcf" stroke-width="1"/>
<line x1="871.5" y1="139.5" x2="871.5" y2="143.5" stroke="#cfcfcf" stroke-width="1"/>
<line x1="884.5" y1="133.5" x2="884.5" y2="143.5" stroke="#cfcfcf" stroke-width="1"/>
<line x1="897.5" y1="139.5" x2="897.5" y2="143.5" stroke="#cfcfcf" stroke-width="1"/>
<line x1="910.5" y1="136.5" x2="910.5" y2="143.5" stroke="#cfcfcf" stroke-width="1"/>
<line x1="923.5" y1="139.5" x2="923.5" y2="143.5" stroke="#cfcfcf" stroke-width="1"/>
<line x1="936.5" y1="118" x2="936.5" y2="143.5" stroke="#d4d4d4" stroke-width="1"/>
<text x="939.8" y="132.3" font-family="Liberation Sans" font-size="15" fill="#575757">10</text>
<line x1="949.5" y1="139.5" x2="949.5" y2="143.5" stroke="#cfcfcf" stroke-width="1"/>
<line x1="961.5" y1="136.5" x2="961.5" y2="143.5" stroke="#cfcfcf" stroke-width="1"/>
<line x1="974.5" y1="139.5" x2="974.5" y2="143.5" stroke="#cfcfcf" stroke-width="1"/>
<line x1="987.5" y1="133.5" x2="987.5" y2="143.5" stroke="#cfcfcf" stroke-width="1"/>
<line x1="1000.5" y1="139.5" x2="1000.5" y2="143.5" stroke="#cfcfcf" stroke-width="1"/>
<line x1="1013.5" y1="136.5" x2="1013.5" y2="143.5" stroke="#cfcfcf" stroke-width="1"/>
<line x1="1026.5" y1="139.5" x2="1026.5" y2="143.5" stroke="#cfcfcf" stroke-width="1"/>
<line x1="1039.5" y1="118" x2="1039.5" y2="143.5" stroke="#d4d4d4" stroke-width="1"/>
<text x="1043.3" y="132.3" font-family="Liberation Sans" font-size="15" fill="#575757">11</text>
<line x1="1052.5" y1="139.5" x2="1052.5" y2="143.5" stroke="#cfcfcf" stroke-width="1"/>
<line x1="1065.5" y1="136.5" x2="1065.5" y2="143.5" stroke="#cfcfcf" stroke-width="1"/>
<line x1="1078.5" y1="139.5" x2="1078.5" y2="143.5" stroke="#cfcfcf" stroke-width="1"/>
<line x1="1091.5" y1="133.5" x2="1091.5" y2="143.5" stroke="#cfcfcf" stroke-width="1"/>
<line x1="1104.5" y1="139.5" x2="1104.5" y2="143.5" stroke="#cfcfcf" stroke-width="1"/>
<line x1="1117.5" y1="136.5" x2="1117.5" y2="143.5" stroke="#cfcfcf" stroke-width="1"/>
<line x1="1130.5" y1="139.5" x2="1130.5" y2="143.5" stroke="#cfcfcf" stroke-width="1"/>
<line x1="1142.5" y1="118" x2="1142.5" y2="143.5" stroke="#d4d4d4" stroke-width="1"/>
<text x="1146.7" y="132.3" font-family="Liberation Sans" font-size="15" fill="#575757">12</text>
<line x1="1155.5" y1="139.5" x2="1155.5" y2="143.5" stroke="#cfcfcf" stroke-width="1"/>
<line x1="1168.5" y1="136.5" x2="1168.5" y2="143.5" stroke="#cfcfcf" stroke-width="1"/>
<line x1="1181.5" y1="139.5" x2="1181.5" y2="143.5" stroke="#cfcfcf" stroke-width="1"/>
<line x1="101.5" y1="120.5" x2="105.5" y2="120.5" stroke="#cfcfcf" stroke-width="1"/>
<line x1="95.5" y1="133.5" x2="105.5" y2="133.5" stroke="#cfcfcf" stroke-width="1"/>
<line x1="101.5" y1="146.5" x2="105.5" y2="146.5" stroke="#cfcfcf" stroke-width="1"/>
<line x1="98.5" y1="159.5" x2="105.5" y2="159.5" stroke="#cfcfcf" stroke-width="1"/>
<line x1="101.5" y1="172.5" x2="105.5" y2="172.5" stroke="#cfcfcf" stroke-width="1"/>
<line x1="80" y1="185.5" x2="105.5" y2="185.5" stroke="#d4d4d4" stroke-width="1"/>
<text transform="translate(92.9,189.4) rotate(-90)" text-anchor="end" font-family="Liberation Sans" font-size="15" fill="#575757">2</text>
<line x1="101.5" y1="198.5" x2="105.5" y2="198.5" stroke="#cfcfcf" stroke-width="1"/>
<line x1="98.5" y1="211.5" x2="105.5" y2="211.5" stroke="#cfcfcf" stroke-width="1"/>
<line x1="101.5" y1="224.5" x2="105.5" y2="224.5" stroke="#cfcfcf" stroke-width="1"/>
<line x1="95.5" y1="237.5" x2="105.5" y2="237.5" stroke="#cfcfcf" stroke-width="1"/>
<line x1="101.5" y1="250.5" x2="105.5" y2="250.5" stroke="#cfcfcf" stroke-width="1"/>
<line x1="98.5" y1="262.5" x2="105.5" y2="262.5" stroke="#cfcfcf" stroke-width="1"/>
<line x1="101.5" y1="275.5" x2="105.5" y2="275.5" stroke="#cfcfcf" stroke-width="1"/>
<line x1="80" y1="288.5" x2="105.5" y2="288.5" stroke="#d4d4d4" stroke-width="1"/>
<text transform="translate(92.9,292.8) rotate(-90)" text-anchor="end" font-family="Liberation Sans" font-size="15" fill="#575757">3</text>
<line x1="101.5" y1="301.5" x2="105.5" y2="301.5" stroke="#cfcfcf" stroke-width="1"/>
<line x1="98.5" y1="314.5" x2="105.5" y2="314.5" stroke="#cfcfcf" stroke-width="1"/>
<line x1="101.5" y1="327.5" x2="105.5" y2="327.5" stroke="#cfcfcf" stroke-width="1"/>
<line x1="95.5" y1="340.5" x2="105.5" y2="340.5" stroke="#cfcfcf" stroke-width="1"/>
<line x1="101.5" y1="353.5" x2="105.5" y2="353.5" stroke="#cfcfcf" stroke-width="1"/>
<line x1="98.5" y1="366.5" x2="105.5" y2="366.5" stroke="#cfcfcf" stroke-width="1"/>
<line x1="101.5" y1="379.5" x2="105.5" y2="379.5" stroke="#cfcfcf" stroke-width="1"/>
<line x1="80" y1="392.5" x2="105.5" y2="392.5" stroke="#d4d4d4" stroke-width="1"/>
<text transform="translate(92.9,396.1) rotate(-90)" text-anchor="end" font-family="Liberation Sans" font-size="15" fill="#575757">4</text>
<line x1="101.5" y1="405.5" x2="105.5" y2="405.5" stroke="#cfcfcf" stroke-width="1"/>
<line x1="98.5" y1="417.5" x2="105.5" y2="417.5" stroke="#cfcfcf" stroke-width="1"/>
<line x1="101.5" y1="430.5" x2="105.5" y2="430.5" stroke="#cfcfcf" stroke-width="1"/>
<line x1="95.5" y1="443.5" x2="105.5" y2="443.5" stroke="#cfcfcf" stroke-width="1"/>
<line x1="101.5" y1="456.5" x2="105.5" y2="456.5" stroke="#cfcfcf" stroke-width="1"/>
<line x1="98.5" y1="469.5" x2="105.5" y2="469.5" stroke="#cfcfcf" stroke-width="1"/>
<line x1="101.5" y1="482.5" x2="105.5" y2="482.5" stroke="#cfcfcf" stroke-width="1"/>
<line x1="80" y1="495.5" x2="105.5" y2="495.5" stroke="#d4d4d4" stroke-width="1"/>
<text transform="translate(92.9,499.5) rotate(-90)" text-anchor="end" font-family="Liberation Sans" font-size="15" fill="#575757">5</text>
<line x1="101.5" y1="508.5" x2="105.5" y2="508.5" stroke="#cfcfcf" stroke-width="1"/>
<line x1="98.5" y1="521.5" x2="105.5" y2="521.5" stroke="#cfcfcf" stroke-width="1"/>
<line x1="101.5" y1="534.5" x2="105.5" y2="534.5" stroke="#cfcfcf" stroke-width="1"/>
<line x1="95.5" y1="547.5" x2="105.5" y2="547.5" stroke="#cfcfcf" stroke-width="1"/>
<line x1="101.5" y1="560.5" x2="105.5" y2="560.5" stroke="#cfcfcf" stroke-width="1"/>
<line x1="98.5" y1="573.5" x2="105.5" y2="573.5" stroke="#cfcfcf" stroke-width="1"/>
<line x1="101.5" y1="585.5" x2="105.5" y2="585.5" stroke="#cfcfcf" stroke-width="1"/>
<line x1="80" y1="598.5" x2="105.5" y2="598.5" stroke="#d4d4d4" stroke-width="1"/>
<text transform="translate(92.9,602.8) rotate(-90)" text-anchor="end" font-family="Liberation Sans" font-size="15" fill="#575757">6</text>
<line x1="101.5" y1="611.5" x2="105.5" y2="611.5" stroke="#cfcfcf" stroke-width="1"/>
<line x1="98.5" y1="624.5" x2="105.5" y2="624.5" stroke="#cfcfcf" stroke-width="1"/>
<line x1="101.5" y1="637.5" x2="105.5" y2="637.5" stroke="#cfcfcf" stroke-width="1"/>
<line x1="95.5" y1="650.5" x2="105.5" y2="650.5" stroke="#cfcfcf" stroke-width="1"/>
<line x1="101.5" y1="663.5" x2="105.5" y2="663.5" stroke="#cfcfcf" stroke-width="1"/>
<line x1="98.5" y1="676.5" x2="105.5" y2="676.5" stroke="#cfcfcf" stroke-width="1"/>
<line x1="101.5" y1="689.5" x2="105.5" y2="689.5" stroke="#cfcfcf" stroke-width="1"/>
<line x1="80" y1="702.5" x2="105.5" y2="702.5" stroke="#d4d4d4" stroke-width="1"/>
<text transform="translate(92.9,706.2) rotate(-90)" text-anchor="end" font-family="Liberation Sans" font-size="15" fill="#575757">7</text>
<line x1="101.5" y1="715.5" x2="105.5" y2="715.5" stroke="#cfcfcf" stroke-width="1"/>
<line x1="98.5" y1="728.5" x2="105.5" y2="728.5" stroke="#cfcfcf" stroke-width="1"/>
<line x1="101.5" y1="740.5" x2="105.5" y2="740.5" stroke="#cfcfcf" stroke-width="1"/>
<line x1="95.5" y1="753.5" x2="105.5" y2="753.5" stroke="#cfcfcf" stroke-width="1"/>
<line x1="101.5" y1="766.5" x2="105.5" y2="766.5" stroke="#cfcfcf" stroke-width="1"/>
<line x1="98.5" y1="779.5" x2="105.5" y2="779.5" stroke="#cfcfcf" stroke-width="1"/>
<line x1="101.5" y1="792.5" x2="105.5" y2="792.5" stroke="#cfcfcf" stroke-width="1"/>
<line x1="80" y1="805.5" x2="105.5" y2="805.5" stroke="#d4d4d4" stroke-width="1"/>
<text transform="translate(92.9,809.5) rotate(-90)" text-anchor="end" font-family="Liberation Sans" font-size="15" fill="#575757">8</text>
<line x1="101.5" y1="818.5" x2="105.5" y2="818.5" stroke="#cfcfcf" stroke-width="1"/>
<line x1="98.5" y1="831.5" x2="105.5" y2="831.5" stroke="#cfcfcf" stroke-width="1"/>
<line x1="101.5" y1="844.5" x2="105.5" y2="844.5" stroke="#cfcfcf" stroke-width="1"/>
<line x1="95.5" y1="857.5" x2="105.5" y2="857.5" stroke="#cfcfcf" stroke-width="1"/>
<line x1="101.5" y1="870.5" x2="105.5" y2="870.5" stroke="#cfcfcf" stroke-width="1"/>
<line x1="98.5" y1="883.5" x2="105.5" y2="883.5" stroke="#cfcfcf" stroke-width="1"/>
<line x1="101.5" y1="895.5" x2="105.5" y2="895.5" stroke="#cfcfcf" stroke-width="1"/>
<line x1="80" y1="908.5" x2="105.5" y2="908.5" stroke="#d4d4d4" stroke-width="1"/>
<text transform="translate(92.9,912.9) rotate(-90)" text-anchor="end" font-family="Liberation Sans" font-size="15" fill="#575757">9</text>
<line x1="101.5" y1="921.5" x2="105.5" y2="921.5" stroke="#cfcfcf" stroke-width="1"/>
<line x1="98.5" y1="934.5" x2="105.5" y2="934.5" stroke="#cfcfcf" stroke-width="1"/>
<line x1="101.5" y1="947.5" x2="105.5" y2="947.5" stroke="#cfcfcf" stroke-width="1"/>
<line x1="95.5" y1="960.5" x2="105.5" y2="960.5" stroke="#cfcfcf" stroke-width="1"/>
<line x1="101.5" y1="973.5" x2="105.5" y2="973.5" stroke="#cfcfcf" stroke-width="1"/>
<line x1="98.5" y1="986.5" x2="105.5" y2="986.5" stroke="#cfcfcf" stroke-width="1"/>
<line x1="101.5" y1="999.5" x2="105.5" y2="999.5" stroke="#cfcfcf" stroke-width="1"/>
<line x1="80" y1="1012.5" x2="105.5" y2="1012.5" stroke="#d4d4d4" stroke-width="1"/>
<text transform="translate(92.9,1016.2) rotate(-90)" text-anchor="end" font-family="Liberation Sans" font-size="15" fill="#575757">10</text>
<line x1="101.5" y1="1025.5" x2="105.5" y2="1025.5" stroke="#cfcfcf" stroke-width="1"/>
<line x1="98.5" y1="1038.5" x2="105.5" y2="1038.5" stroke="#cfcfcf" stroke-width="1"/>
<line x1="101.5" y1="1051.5" x2="105.5" y2="1051.5" stroke="#cfcfcf" stroke-width="1"/>
<line x1="95.5" y1="1063.5" x2="105.5" y2="1063.5" stroke="#cfcfcf" stroke-width="1"/>
<line x1="101.5" y1="1076.5" x2="105.5" y2="1076.5" stroke="#cfcfcf" stroke-width="1"/>
<line x1="98.5" y1="1089.5" x2="105.5" y2="1089.5" stroke="#cfcfcf" stroke-width="1"/>
<line x1="101.5" y1="1102.5" x2="105.5" y2="1102.5" stroke="#cfcfcf" stroke-width="1"/>
<line x1="80" y1="1115.5" x2="105.5" y2="1115.5" stroke="#d4d4d4" stroke-width="1"/>
<text transform="translate(92.9,1119.6) rotate(-90)" text-anchor="end" font-family="Liberation Sans" font-size="15" fill="#575757">11</text>
<line x1="101.5" y1="1128.5" x2="105.5" y2="1128.5" stroke="#cfcfcf" stroke-width="1"/>
<line x1="98.5" y1="1141.5" x2="105.5" y2="1141.5" stroke="#cfcfcf" stroke-width="1"/>
<line x1="101.5" y1="1154.5" x2="105.5" y2="1154.5" stroke="#cfcfcf" stroke-width="1"/>
<line x1="95.5" y1="1167.5" x2="105.5" y2="1167.5" stroke="#cfcfcf" stroke-width="1"/>
<line x1="101.5" y1="1180.5" x2="105.5" y2="1180.5" stroke="#cfcfcf" stroke-width="1"/>
<line x1="98.5" y1="1193.5" x2="105.5" y2="1193.5" stroke="#cfcfcf" stroke-width="1"/>
<line x1="101.5" y1="1206.5" x2="105.5" y2="1206.5" stroke="#cfcfcf" stroke-width="1"/>
<line x1="80" y1="1218.5" x2="105.5" y2="1218.5" stroke="#d4d4d4" stroke-width="1"/>
<text transform="translate(92.9,1223.0) rotate(-90)" text-anchor="end" font-family="Liberation Sans" font-size="15" fill="#575757">12</text>
<line x1="101.5" y1="1231.5" x2="105.5" y2="1231.5" stroke="#cfcfcf" stroke-width="1"/>
<line x1="98.5" y1="1244.5" x2="105.5" y2="1244.5" stroke="#cfcfcf" stroke-width="1"/>
<line x1="101.5" y1="1257.5" x2="105.5" y2="1257.5" stroke="#cfcfcf" stroke-width="1"/>
<line x1="95.5" y1="1270.5" x2="105.5" y2="1270.5" stroke="#cfcfcf" stroke-width="1"/>
<line x1="101.5" y1="1283.5" x2="105.5" y2="1283.5" stroke="#cfcfcf" stroke-width="1"/>
<line x1="98.5" y1="1296.5" x2="105.5" y2="1296.5" stroke="#cfcfcf" stroke-width="1"/>
<line x1="101.5" y1="1309.5" x2="105.5" y2="1309.5" stroke="#cfcfcf" stroke-width="1"/>
<line x1="80" y1="1322.5" x2="105.5" y2="1322.5" stroke="#d4d4d4" stroke-width="1"/>
<text transform="translate(92.9,1326.3) rotate(-90)" text-anchor="end" font-family="Liberation Sans" font-size="15" fill="#575757">13</text>
<line x1="101.5" y1="1335.5" x2="105.5" y2="1335.5" stroke="#cfcfcf" stroke-width="1"/>
<line x1="98.5" y1="1348.5" x2="105.5" y2="1348.5" stroke="#cfcfcf" stroke-width="1"/>
<line x1="101.5" y1="1361.5" x2="105.5" y2="1361.5" stroke="#cfcfcf" stroke-width="1"/>
<line x1="95.5" y1="1373.5" x2="105.5" y2="1373.5" stroke="#cfcfcf" stroke-width="1"/>
<line x1="101.5" y1="1386.5" x2="105.5" y2="1386.5" stroke="#cfcfcf" stroke-width="1"/>
<line x1="98.5" y1="1399.5" x2="105.5" y2="1399.5" stroke="#cfcfcf" stroke-width="1"/>
<line x1="101.5" y1="1412.5" x2="105.5" y2="1412.5" stroke="#cfcfcf" stroke-width="1"/>
<line x1="80" y1="1425.5" x2="105.5" y2="1425.5" stroke="#d4d4d4" stroke-width="1"/>
<text transform="translate(92.9,1429.6) rotate(-90)" text-anchor="end" font-family="Liberation Sans" font-size="15" fill="#575757">14</text>
<line x1="101.5" y1="1438.5" x2="105.5" y2="1438.5" stroke="#cfcfcf" stroke-width="1"/>
<line x1="98.5" y1="1451.5" x2="105.5" y2="1451.5" stroke="#cfcfcf" stroke-width="1"/>
<line x1="101.5" y1="1464.5" x2="105.5" y2="1464.5" stroke="#cfcfcf" stroke-width="1"/>
<line x1="95.5" y1="1477.5" x2="105.5" y2="1477.5" stroke="#cfcfcf" stroke-width="1"/>
<line x1="101.5" y1="1490.5" x2="105.5" y2="1490.5" stroke="#cfcfcf" stroke-width="1"/>
</svg><svg style="left:0;top:0" width="1536" height="1493" viewBox="0 0 1536 1493">
<g transform="translate(220,260) scale(0.180844)">
<path d="M 402 295 L 554 202 C 545 225 542 245 542.2 262.7 C 540 300 539 330 539.2 351.6 C 540 365 548 371 557 370.9 L 616.2 370.9 L 610.3 419.8 C 611 432 615 440 622.2 443.5 L 711.1 493.9 C 720 499 728 505 730 515 L 730 1430 L 402 1430 L 410.9 662.7 C 435 580 452 510 449.4 458.3 C 446 390 425 335 402 295 Z" fill="#e6e6e6" stroke="#868686" stroke-width="10.30" stroke-linejoin="round" vector-effect="non-scaling-stroke"/>
<path d="M 1088.0 295.0 L 936.0 202.0 C 945.0 225.0 948.0 245.0 947.8 262.7 C 950.0 300.0 951.0 330.0 950.8 351.6 C 950.0 365.0 942.0 371.0 933.0 370.9 L 873.8 370.9 L 879.7 419.8 C 879.0 432.0 875.0 440.0 867.8 443.5 L 778.9 493.9 C 770.0 499.0 762.0 505.0 760.0 515.0 L 760.0 1430.0 L 1088.0 1430.0 L 1079.1 662.7 C 1055.0 580.0 1038.0 510.0 1040.6 458.3 C 1044.0 390.0 1065.0 335.0 1088.0 295.0 Z" fill="#e6e6e6" stroke="#868686" stroke-width="10.30" stroke-linejoin="round" vector-effect="non-scaling-stroke"/>
<path d="M 389 325 C 415 380 428 430 422.8 458.3 C 420 540 400 610 387.2 662.7 L 381.3 1227.4 L 335.3 1304.4 L 113 1218.5 Z" fill="#e6e6e6" stroke="#868686" stroke-width="10.30" stroke-linejoin="round" vector-effect="non-scaling-stroke"/>
<path d="M 1101.0 325.0 C 1075.0 380.0 1062.0 430.0 1067.2 458.3 C 1070.0 540.0 1090.0 610.0 1102.8 662.7 L 1108.7 1227.4 L 1154.7 1304.4 L 1377.0 1218.5 Z" fill="#e6e6e6" stroke="#868686" stroke-width="10.30" stroke-linejoin="round" vector-effect="non-scaling-stroke"/>
<path d="M 104.2 1245.2 L 322 1331 L 304.2 1363.7 L 93.8 1283.7 Z" fill="#e6e6e6" stroke="#868686" stroke-width="10.30" stroke-linejoin="round" vector-effect="non-scaling-stroke"/>
<path d="M 1385.8 1245.2 L 1168.0 1331.0 L 1185.8 1363.7 L 1396.2 1283.7 Z" fill="#e6e6e6" stroke="#868686" stroke-width="10.30" stroke-linejoin="round" vector-effect="non-scaling-stroke"/>
<path d="M 629.6 138.3 C 586.6 167.9 568.8 233.1 567.3 344.2 L 634 344.2 C 641 346 644.4 351.6 642.9 363.5 L 637 416.8 L 728.8 473.1 C 675.5 381.3 625.1 322 622.2 233.1 C 621 190 625 160 629.6 138.3 Z" fill="#e6e6e6" stroke="#868686" stroke-width="10.30" stroke-linejoin="round" vector-effect="non-scaling-stroke"/>
<path d="M 860.4 138.3 C 903.4 167.9 921.2 233.1 922.7 344.2 L 856.0 344.2 C 849.0 346.0 845.6 351.6 847.1 363.5 L 853.0 416.8 L 761.2 473.1 C 814.5 381.3 864.9 322.0 867.8 233.1 C 869.0 190.0 865.0 160.0 860.4 138.3 Z" fill="#e6e6e6" stroke="#868686" stroke-width="10.30" stroke-linejoin="round" vector-effect="non-scaling-stroke"/>
<path d="M 657.7 122 L 826.6 122 L 830.2 162.6 L 801.5 162.6 C 789.6 163.5 789.6 187.2 801.5 188.7 L 830.2 188.7 C 832.6 277.6 794 351.6 743.6 437.6 C 693.3 351.6 653.3 277.6 654.2 190.1 L 768.9 190.1 C 783.7 188.7 783.7 163.5 768.9 162.6 L 656.2 162.6 Z" fill="#e6e6e6" stroke="#868686" stroke-width="10.30" stroke-linejoin="round" vector-effect="non-scaling-stroke"/>
<path d="M 402 295 L 554 202 C 545 225 542 245 542.2 262.7 C 540 300 539 330 539.2 351.6 C 540 365 548 371 557 370.9 L 616.2 370.9 L 610.3 419.8 C 611 432 615 440 622.2 443.5 L 711.1 493.9 C 720 499 728 505 730 515 L 730 1430 L 402 1430 L 410.9 662.7 C 435 580 452 510 449.4 458.3 C 446 390 425 335 402 295 Z" fill="#e6e6e6" stroke="#e6e6e6" stroke-width="8.10" stroke-linejoin="round" vector-effect="non-scaling-stroke"/>
<path d="M 1088.0 295.0 L 936.0 202.0 C 945.0 225.0 948.0 245.0 947.8 262.7 C 950.0 300.0 951.0 330.0 950.8 351.6 C 950.0 365.0 942.0 371.0 933.0 370.9 L 873.8 370.9 L 879.7 419.8 C 879.0 432.0 875.0 440.0 867.8 443.5 L 778.9 493.9 C 770.0 499.0 762.0 505.0 760.0 515.0 L 760.0 1430.0 L 1088.0 1430.0 L 1079.1 662.7 C 1055.0 580.0 1038.0 510.0 1040.6 458.3 C 1044.0 390.0 1065.0 335.0 1088.0 295.0 Z" fill="#e6e6e6" stroke="#e6e6e6" stroke-width="8.10" stroke-linejoin="round" vector-effect="non-scaling-stroke"/>
<path d="M 389 325 C 415 380 428 430 422.8 458.3 C 420 540 400 610 387.2 662.7 L 381.3 1227.4 L 335.3 1304.4 L 113 1218.5 Z" fill="#e6e6e6" stroke="#e6e6e6" stroke-width="8.10" stroke-linejoin="round" vector-effect="non-scaling-stroke"/>
<path d="M 1101.0 325.0 C 1075.0 380.0 1062.0 430.0 1067.2 458.3 C 1070.0 540.0 1090.0 610.0 1102.8 662.7 L 1108.7 1227.4 L 1154.7 1304.4 L 1377.0 1218.5 Z" fill="#e6e6e6" stroke="#e6e6e6" stroke-width="8.10" stroke-linejoin="round" vector-effect="non-scaling-stroke"/>
<path d="M 104.2 1245.2 L 322 1331 L 304.2 1363.7 L 93.8 1283.7 Z" fill="#e6e6e6" stroke="#e6e6e6" stroke-width="8.10" stroke-linejoin="round" vector-effect="non-scaling-stroke"/>
<path d="M 1385.8 1245.2 L 1168.0 1331.0 L 1185.8 1363.7 L 1396.2 1283.7 Z" fill="#e6e6e6" stroke="#e6e6e6" stroke-width="8.10" stroke-linejoin="round" vector-effect="non-scaling-stroke"/>
<path d="M 629.6 138.3 C 586.6 167.9 568.8 233.1 567.3 344.2 L 634 344.2 C 641 346 644.4 351.6 642.9 363.5 L 637 416.8 L 728.8 473.1 C 675.5 381.3 625.1 322 622.2 233.1 C 621 190 625 160 629.6 138.3 Z" fill="#e6e6e6" stroke="#e6e6e6" stroke-width="8.10" stroke-linejoin="round" vector-effect="non-scaling-stroke"/>
<path d="M 860.4 138.3 C 903.4 167.9 921.2 233.1 922.7 344.2 L 856.0 344.2 C 849.0 346.0 845.6 351.6 847.1 363.5 L 853.0 416.8 L 761.2 473.1 C 814.5 381.3 864.9 322.0 867.8 233.1 C 869.0 190.0 865.0 160.0 860.4 138.3 Z" fill="#e6e6e6" stroke="#e6e6e6" stroke-width="8.10" stroke-linejoin="round" vector-effect="non-scaling-stroke"/>
<path d="M 657.7 122 L 826.6 122 L 830.2 162.6 L 801.5 162.6 C 789.6 163.5 789.6 187.2 801.5 188.7 L 830.2 188.7 C 832.6 277.6 794 351.6 743.6 437.6 C 693.3 351.6 653.3 277.6 654.2 190.1 L 768.9 190.1 C 783.7 188.7 783.7 163.5 768.9 162.6 L 656.2 162.6 Z" fill="#e6e6e6" stroke="#e6e6e6" stroke-width="8.10" stroke-linejoin="round" vector-effect="non-scaling-stroke"/>
<path d="M 402 295 L 554 202 C 545 225 542 245 542.2 262.7 C 540 300 539 330 539.2 351.6 C 540 365 548 371 557 370.9 L 616.2 370.9 L 610.3 419.8 C 611 432 615 440 622.2 443.5 L 711.1 493.9 C 720 499 728 505 730 515 L 730 1430 L 402 1430 L 410.9 662.7 C 435 580 452 510 449.4 458.3 C 446 390 425 335 402 295 Z" fill="#e0e0e0" stroke="#1c1c1c" stroke-width="1.9" stroke-linejoin="round" vector-effect="non-scaling-stroke"/>
<path d="M 1088.0 295.0 L 936.0 202.0 C 945.0 225.0 948.0 245.0 947.8 262.7 C 950.0 300.0 951.0 330.0 950.8 351.6 C 950.0 365.0 942.0 371.0 933.0 370.9 L 873.8 370.9 L 879.7 419.8 C 879.0 432.0 875.0 440.0 867.8 443.5 L 778.9 493.9 C 770.0 499.0 762.0 505.0 760.0 515.0 L 760.0 1430.0 L 1088.0 1430.0 L 1079.1 662.7 C 1055.0 580.0 1038.0 510.0 1040.6 458.3 C 1044.0 390.0 1065.0 335.0 1088.0 295.0 Z" fill="#e0e0e0" stroke="#1c1c1c" stroke-width="1.9" stroke-linejoin="round" vector-effect="non-scaling-stroke"/>
<path d="M 389 325 C 415 380 428 430 422.8 458.3 C 420 540 400 610 387.2 662.7 L 381.3 1227.4 L 335.3 1304.4 L 113 1218.5 Z" fill="#e0e0e0" stroke="#1c1c1c" stroke-width="1.9" stroke-linejoin="round" vector-effect="non-scaling-stroke"/>
<path d="M 1101.0 325.0 C 1075.0 380.0 1062.0 430.0 1067.2 458.3 C 1070.0 540.0 1090.0 610.0 1102.8 662.7 L 1108.7 1227.4 L 1154.7 1304.4 L 1377.0 1218.5 Z" fill="#e0e0e0" stroke="#1c1c1c" stroke-width="1.9" stroke-linejoin="round" vector-effect="non-scaling-stroke"/>
<path d="M 104.2 1245.2 L 322 1331 L 304.2 1363.7 L 93.8 1283.7 Z" fill="#e0e0e0" stroke="#1c1c1c" stroke-width="1.9" stroke-linejoin="round" vector-effect="non-scaling-stroke"/>
<path d="M 1385.8 1245.2 L 1168.0 1331.0 L 1185.8 1363.7 L 1396.2 1283.7 Z" fill="#e0e0e0" stroke="#1c1c1c" stroke-width="1.9" stroke-linejoin="round" vector-effect="non-scaling-stroke"/>
<path d="M 629.6 138.3 C 586.6 167.9 568.8 233.1 567.3 344.2 L 634 344.2 C 641 346 644.4 351.6 642.9 363.5 L 637 416.8 L 728.8 473.1 C 675.5 381.3 625.1 322 622.2 233.1 C 621 190 625 160 629.6 138.3 Z" fill="#e0e0e0" stroke="#1c1c1c" stroke-width="1.9" stroke-linejoin="round" vector-effect="non-scaling-stroke"/>
<path d="M 860.4 138.3 C 903.4 167.9 921.2 233.1 922.7 344.2 L 856.0 344.2 C 849.0 346.0 845.6 351.6 847.1 363.5 L 853.0 416.8 L 761.2 473.1 C 814.5 381.3 864.9 322.0 867.8 233.1 C 869.0 190.0 865.0 160.0 860.4 138.3 Z" fill="#e0e0e0" stroke="#1c1c1c" stroke-width="1.9" stroke-linejoin="round" vector-effect="non-scaling-stroke"/>
<path d="M 657.7 122 L 826.6 122 L 830.2 162.6 L 801.5 162.6 C 789.6 163.5 789.6 187.2 801.5 188.7 L 830.2 188.7 C 832.6 277.6 794 351.6 743.6 437.6 C 693.3 351.6 653.3 277.6 654.2 190.1 L 768.9 190.1 C 783.7 188.7 783.7 163.5 768.9 162.6 L 656.2 162.6 Z" fill="#e0e0e0" stroke="#1c1c1c" stroke-width="1.9" stroke-linejoin="round" vector-effect="non-scaling-stroke"/>
<circle cx="790" cy="545" r="17" fill="#e0e0e0" stroke="#1c1c1c" stroke-width="1.8" vector-effect="non-scaling-stroke"/>
<circle cx="790" cy="765" r="17" fill="#e0e0e0" stroke="#1c1c1c" stroke-width="1.8" vector-effect="non-scaling-stroke"/>
<circle cx="790" cy="992" r="17" fill="#e0e0e0" stroke="#1c1c1c" stroke-width="1.8" vector-effect="non-scaling-stroke"/>
<circle cx="790" cy="1218" r="17" fill="#e0e0e0" stroke="#1c1c1c" stroke-width="1.8" vector-effect="non-scaling-stroke"/>
</g>
<g transform="translate(515,255) scale(0.187542)">
<path d="M 490 100 C 590 118 700 118 800 100 L 1070 262 C 1110 330 1160 450 1212 590 C 1225 620 1220 640 1200 650 L 990 712 C 965 718 960 700 960 680 L 962 1000 L 968 1340 C 970 1390 940 1412 890 1412 L 410 1412 C 350 1412 325 1390 327 1340 L 342 1000 L 338 680 C 338 700 332 718 305 712 L 95 645 C 78 638 75 620 85 595 C 135 450 180 330 215 262 Z" fill="#e6e6e6" stroke="#868686" stroke-width="9.90" stroke-linejoin="round" vector-effect="non-scaling-stroke"/>
<path d="M 490 100 C 590 118 700 118 800 100 L 1070 262 C 1110 330 1160 450 1212 590 C 1225 620 1220 640 1200 650 L 990 712 C 965 718 960 700 960 680 L 962 1000 L 968 1340 C 970 1390 940 1412 890 1412 L 410 1412 C 350 1412 325 1390 327 1340 L 342 1000 L 338 680 C 338 700 332 718 305 712 L 95 645 C 78 638 75 620 85 595 C 135 450 180 330 215 262 Z" fill="#e6e6e6" stroke="#e6e6e6" stroke-width="7.70" stroke-linejoin="round" vector-effect="non-scaling-stroke"/>
<path d="M 490 100 C 590 118 700 118 800 100 L 1070 262 C 1110 330 1160 450 1212 590 C 1225 620 1220 640 1200 650 L 990 712 C 965 718 960 700 960 680 L 962 1000 L 968 1340 C 970 1390 940 1412 890 1412 L 410 1412 C 350 1412 325 1390 327 1340 L 342 1000 L 338 680 C 338 700 332 718 305 712 L 95 645 C 78 638 75 620 85 595 C 135 450 180 330 215 262 Z" fill="#e0e0e0" stroke="#1c1c1c" stroke-width="1.85" stroke-linejoin="round" vector-effect="non-scaling-stroke"/>
<path d="M 490 100 C 480 140 500 165 540 195 C 600 258 700 268 760 195 C 790 165 810 140 800 100" fill="none" stroke="#1c1c1c" stroke-width="1.85" stroke-linecap="round" stroke-linejoin="round" vector-effect="non-scaling-stroke"/>
<path d="M 490 168 C 420 210 300 290 275 345 C 265 380 270 420 290 480 L 340 645" fill="none" stroke="#1c1c1c" stroke-width="1.85" stroke-linecap="round" stroke-linejoin="round" vector-effect="non-scaling-stroke"/>
<path d="M 800 168 C 880 210 990 290 1015 345 C 1025 385 1020 420 1000 480 L 960 645" fill="none" stroke="#1c1c1c" stroke-width="1.85" stroke-linecap="round" stroke-linejoin="round" vector-effect="non-scaling-stroke"/>
<path d="M 90 598 C 170 630 260 660 338 668" fill="none" stroke="#1c1c1c" stroke-width="1.85" stroke-linecap="round" stroke-linejoin="round" vector-effect="non-scaling-stroke"/>
<path d="M 1212 590 C 1130 630 1040 660 960 668" fill="none" stroke="#1c1c1c" stroke-width="1.85" stroke-linecap="round" stroke-linejoin="round" vector-effect="non-scaling-stroke"/>
<path d="M 345 1010 C 400 1200 460 1330 510 1412" fill="none" stroke="#1c1c1c" stroke-width="1.85" stroke-linecap="round" stroke-linejoin="round" vector-effect="non-scaling-stroke"/>
<path d="M 950 1010 C 900 1200 840 1330 790 1412" fill="none" stroke="#1c1c1c" stroke-width="1.85" stroke-linecap="round" stroke-linejoin="round" vector-effect="non-scaling-stroke"/>
</g>
<g transform="translate(800,295) scale(0.149740)">
<path d="M 300 112 H 1268 C 1310 112 1342 140 1345 185 L 1445 1320 C 1448 1360 1420 1382 1385 1382 H 905 C 878 1382 860 1360 855 1335 L 795 1060 C 790 1045 775 1045 770 1060 L 712 1330 C 705 1360 685 1382 650 1382 H 180 C 140 1382 118 1355 120 1320 L 218 185 C 222 140 255 112 300 112 Z" fill="#e6e6e6" stroke="#868686" stroke-width="9.90" stroke-linejoin="round" vector-effect="non-scaling-stroke"/>
<path d="M 300 112 H 1268 C 1310 112 1342 140 1345 185 L 1445 1320 C 1448 1360 1420 1382 1385 1382 H 905 C 878 1382 860 1360 855 1335 L 795 1060 C 790 1045 775 1045 770 1060 L 712 1330 C 705 1360 685 1382 650 1382 H 180 C 140 1382 118 1355 120 1320 L 218 185 C 222 140 255 112 300 112 Z" fill="#e6e6e6" stroke="#e6e6e6" stroke-width="7.70" stroke-linejoin="round" vector-effect="non-scaling-stroke"/>
<path d="M 300 112 H 1268 C 1310 112 1342 140 1345 185 L 1445 1320 C 1448 1360 1420 1382 1385 1382 H 905 C 878 1382 860 1360 855 1335 L 795 1060 C 790 1045 775 1045 770 1060 L 712 1330 C 705 1360 685 1382 650 1382 H 180 C 140 1382 118 1355 120 1320 L 218 185 C 222 140 255 112 300 112 Z" fill="#e0e0e0" stroke="#1c1c1c" stroke-width="1.9" stroke-linejoin="round" vector-effect="non-scaling-stroke"/>
<path d="M 215 250 H 1350" fill="none" stroke="#1c1c1c" stroke-width="1.9" stroke-linecap="round" stroke-linejoin="round" vector-effect="non-scaling-stroke"/>
<path d="M 750 112 V 780" fill="none" stroke="#1c1c1c" stroke-width="1.9" stroke-linecap="round" stroke-linejoin="round" vector-effect="non-scaling-stroke"/>
<path d="M 885 252 V 640 C 885 720 820 775 750 780" fill="none" stroke="#1c1c1c" stroke-width="1.9" stroke-linecap="round" stroke-linejoin="round" vector-effect="non-scaling-stroke"/>
<path d="M 445 255 C 420 390 320 490 190 555" fill="none" stroke="#1c1c1c" stroke-width="1.9" stroke-linecap="round" stroke-linejoin="round" vector-effect="non-scaling-stroke"/>
<path d="M 1118 255 C 1145 390 1245 490 1375 555" fill="none" stroke="#1c1c1c" stroke-width="1.9" stroke-linecap="round" stroke-linejoin="round" vector-effect="non-scaling-stroke"/>
</g>
<g transform="translate(250,570) scale(0.221031)">
<path d="M 116 62 C 122 50 130 50 150 50 C 300 50 450 50 628 58 C 640 300 642 700 636 1000 C 634 1200 630 1330 624 1418 L 391 1433 C 382 1200 380 900 370 525 C 352 800 320 1100 292 1385 C 290 1420 282 1446 245 1447 C 200 1446 150 1442 118 1437 C 85 1432 71 1415 71 1395 C 65 1250 62 1100 66 1000 C 70 800 80 400 116 62 Z" fill="#e6e6e6" stroke="#777777" stroke-width="6.70" stroke-linejoin="round" vector-effect="non-scaling-stroke"/>
<path d="M 116 62 C 122 50 130 50 150 50 C 300 50 450 50 628 58 C 640 300 642 700 636 1000 C 634 1200 630 1330 624 1418 L 391 1433 C 382 1200 380 900 370 525 C 352 800 320 1100 292 1385 C 290 1420 282 1446 245 1447 C 200 1446 150 1442 118 1437 C 85 1432 71 1415 71 1395 C 65 1250 62 1100 66 1000 C 70 800 80 400 116 62 Z" fill="#e6e6e6" stroke="#e6e6e6" stroke-width="4.50" stroke-linejoin="round" vector-effect="non-scaling-stroke"/>
<clipPath id="clip_pjpants"><path d="M 116 62 C 122 50 130 50 150 50 C 300 50 450 50 628 58 C 640 300 642 700 636 1000 C 634 1200 630 1330 624 1418 L 391 1433 C 382 1200 380 900 370 525 C 352 800 320 1100 292 1385 C 290 1420 282 1446 245 1447 C 200 1446 150 1442 118 1437 C 85 1432 71 1415 71 1395 C 65 1250 62 1100 66 1000 C 70 800 80 400 116 62 Z"/></clipPath>
<path d="M 116 62 C 122 50 130 50 150 50 C 300 50 450 50 628 58 C 640 300 642 700 636 1000 C 634 1200 630 1330 624 1418 L 391 1433 C 382 1200 380 900 370 525 C 352 800 320 1100 292 1385 C 290 1420 282 1446 245 1447 C 200 1446 150 1442 118 1437 C 85 1432 71 1415 71 1395 C 65 1250 62 1100 66 1000 C 70 800 80 400 116 62 Z" fill="#e0e0e0" stroke="#1c1c1c" stroke-width="1.9" stroke-linejoin="round" vector-effect="non-scaling-stroke"/>
<g clip-path="url(#clip_pjpants)">
<path d="M 150 106 C 300 114 450 114 602 102" fill="none" stroke="#1c1c1c" stroke-width="5.6" stroke-linecap="round" stroke-linejoin="round" vector-effect="non-scaling-stroke"/>
<path d="M 366 122 C 330 140 320 172 342 192 C 358 178 372 150 366 122 M 378 122 C 405 145 415 185 388 200 L 383 278" fill="none" stroke="#1c1c1c" stroke-width="5.6" stroke-linecap="round" stroke-linejoin="round" vector-effect="non-scaling-stroke"/>
<path d="M 345 198 L 349 218" fill="none" stroke="#1c1c1c" stroke-width="5.6" stroke-linecap="round" stroke-linejoin="round" vector-effect="non-scaling-stroke"/>
<path d="M 78 1308 C 150 1300 220 1305 290 1318" fill="none" stroke="#1c1c1c" stroke-width="5.6" stroke-linecap="round" stroke-linejoin="round" vector-effect="non-scaling-stroke"/>
<path d="M 405 1322 C 480 1305 550 1298 612 1295" fill="none" stroke="#1c1c1c" stroke-width="5.6" stroke-linecap="round" stroke-linejoin="round" vector-effect="non-scaling-stroke"/>
</g>
<path d="M 150 106 C 300 114 450 114 602 102" fill="none" stroke="#e6e6e6" stroke-width="2.3" stroke-linecap="round" stroke-linejoin="round" vector-effect="non-scaling-stroke"/>
<path d="M 366 122 C 330 140 320 172 342 192 C 358 178 372 150 366 122 M 378 122 C 405 145 415 185 388 200 L 383 278" fill="none" stroke="#e6e6e6" stroke-width="2.3" stroke-linecap="round" stroke-linejoin="round" vector-effect="non-scaling-stroke"/>
<path d="M 345 198 L 349 218" fill="none" stroke="#e6e6e6" stroke-width="2.3" stroke-linecap="round" stroke-linejoin="round" vector-effect="non-scaling-stroke"/>
<path d="M 78 1308 C 150 1300 220 1305 290 1318" fill="none" stroke="#e6e6e6" stroke-width="2.3" stroke-linecap="round" stroke-linejoin="round" vector-effect="non-scaling-stroke"/>
<path d="M 405 1322 C 480 1305 550 1298 612 1295" fill="none" stroke="#e6e6e6" stroke-width="2.3" stroke-linecap="round" stroke-linejoin="round" vector-effect="non-scaling-stroke"/>
</g>
<g transform="translate(515,590) scale(0.190891)">
<path d="M 555 100 C 600 160 660 175 710 175 C 760 175 820 160 845 100 L 1072 225 C 1090 260 1110 330 1125 470 L 1300 1235 C 1305 1260 1295 1285 1282 1298 L 1290 1372 L 1170 1395 L 1150 1322 C 1110 1300 1085 1240 1070 1195 L 1048 1208 L 1040 1285 H 365 L 355 1208 L 335 1195 C 320 1240 295 1300 255 1322 L 235 1395 L 112 1372 L 120 1298 C 105 1285 95 1260 100 1235 L 275 470 C 290 330 310 260 330 222 Z" fill="#e6e6e6" stroke="#868686" stroke-width="9.90" stroke-linejoin="round" vector-effect="non-scaling-stroke"/>
<path d="M 555 100 C 600 160 660 175 710 175 C 760 175 820 160 845 100 L 1072 225 C 1090 260 1110 330 1125 470 L 1300 1235 C 1305 1260 1295 1285 1282 1298 L 1290 1372 L 1170 1395 L 1150 1322 C 1110 1300 1085 1240 1070 1195 L 1048 1208 L 1040 1285 H 365 L 355 1208 L 335 1195 C 320 1240 295 1300 255 1322 L 235 1395 L 112 1372 L 120 1298 C 105 1285 95 1260 100 1235 L 275 470 C 290 330 310 260 330 222 Z" fill="#e6e6e6" stroke="#e6e6e6" stroke-width="7.70" stroke-linejoin="round" vector-effect="non-scaling-stroke"/>
<path d="M 555 100 C 600 160 660 175 710 175 C 760 175 820 160 845 100 L 1072 225 C 1090 260 1110 330 1125 470 L 1300 1235 C 1305 1260 1295 1285 1282 1298 L 1290 1372 L 1170 1395 L 1150 1322 C 1110 1300 1085 1240 1070 1195 L 1048 1208 L 1040 1285 H 365 L 355 1208 L 335 1195 C 320 1240 295 1300 255 1322 L 235 1395 L 112 1372 L 120 1298 C 105 1285 95 1260 100 1235 L 275 470 C 290 330 310 260 330 222 Z" fill="#e0e0e0" stroke="#1c1c1c" stroke-width="1.85" stroke-linejoin="round" vector-effect="non-scaling-stroke"/>
<path d="M 505 130 C 560 200 640 228 710 228 C 780 228 860 200 895 130" fill="none" stroke="#1c1c1c" stroke-width="1.85" stroke-linecap="round" stroke-linejoin="round" vector-effect="non-scaling-stroke"/>
<path d="M 372 330 C 360 520 330 900 325 1030 C 322 1120 330 1180 340 1200" fill="none" stroke="#1c1c1c" stroke-width="1.85" stroke-linecap="round" stroke-linejoin="round" vector-effect="non-scaling-stroke"/>
<path d="M 1030 330 C 1040 520 1070 900 1075 1030 C 1078 1120 1070 1180 1060 1200" fill="none" stroke="#1c1c1c" stroke-width="1.85" stroke-linecap="round" stroke-linejoin="round" vector-effect="non-scaling-stroke"/>
<path d="M 272 472 L 355 520" fill="none" stroke="#1c1c1c" stroke-width="1.85" stroke-linecap="round" stroke-linejoin="round" vector-effect="non-scaling-stroke"/>
<path d="M 1128 472 L 1045 520" fill="none" stroke="#1c1c1c" stroke-width="1.85" stroke-linecap="round" stroke-linejoin="round" vector-effect="non-scaling-stroke"/>
<path d="M 335 1200 H 1070" fill="none" stroke="#1c1c1c" stroke-width="1.85" stroke-linecap="round" stroke-linejoin="round" vector-effect="non-scaling-stroke"/>
<path d="M 120 1298 C 170 1312 215 1322 258 1322" fill="none" stroke="#1c1c1c" stroke-width="1.85" stroke-linecap="round" stroke-linejoin="round" vector-effect="non-scaling-stroke"/>
<path d="M 1282 1298 C 1232 1312 1187 1322 1145 1322" fill="none" stroke="#1c1c1c" stroke-width="1.85" stroke-linecap="round" stroke-linejoin="round" vector-effect="non-scaling-stroke"/>
</g>
<g transform="translate(830,590) scale(0.221031)">
<path d="M 180 62 H 730 C 758 62 772 80 772 105 L 828 1385 C 830 1410 815 1425 790 1425 H 535 C 510 1425 497 1410 495 1390 L 460 600 C 458 590 450 588 446 592 L 412 1390 C 410 1412 395 1425 370 1425 H 115 C 92 1425 78 1410 80 1385 L 135 105 C 137 80 150 62 180 62 Z" fill="#e6e6e6" stroke="#868686" stroke-width="9.90" stroke-linejoin="round" vector-effect="non-scaling-stroke"/>
<path d="M 180 62 H 730 C 758 62 772 80 772 105 L 828 1385 C 830 1410 815 1425 790 1425 H 535 C 510 1425 497 1410 495 1390 L 460 600 C 458 590 450 588 446 592 L 412 1390 C 410 1412 395 1425 370 1425 H 115 C 92 1425 78 1410 80 1385 L 135 105 C 137 80 150 62 180 62 Z" fill="#e6e6e6" stroke="#e6e6e6" stroke-width="7.70" stroke-linejoin="round" vector-effect="non-scaling-stroke"/>
<path d="M 420 600 L 490 600 L 490 1300 L 471.5 1300 L 471.5 1265 A 18.1 18.1 0 0 0 435.3 1265 L 435.3 1300 L 420 1300 Z" fill="#e6e6e6"/>
<path d="M 435.3 1300 L 435.3 1265 A 18.1 18.1 0 0 1 471.5 1265 L 471.5 1300" fill="none" stroke="#8f8f8f" stroke-width="1.1" vector-effect="non-scaling-stroke"/>
<path d="M 180 62 H 730 C 758 62 772 80 772 105 L 828 1385 C 830 1410 815 1425 790 1425 H 535 C 510 1425 497 1410 495 1390 L 460 600 C 458 590 450 588 446 592 L 412 1390 C 410 1412 395 1425 370 1425 H 115 C 92 1425 78 1410 80 1385 L 135 105 C 137 80 150 62 180 62 Z" fill="#e0e0e0" stroke="#1c1c1c" stroke-width="1.85" stroke-linejoin="round" vector-effect="non-scaling-stroke"/>
<path d="M 135 140 H 772" fill="none" stroke="#1c1c1c" stroke-width="1.85" stroke-linecap="round" stroke-linejoin="round" vector-effect="non-scaling-stroke"/>
<path d="M 432 62 V 565 C 432 580 438 588 450 592" fill="none" stroke="#1c1c1c" stroke-width="1.85" stroke-linecap="round" stroke-linejoin="round" vector-effect="non-scaling-stroke"/>
<path d="M 508 142 V 260 C 508 300 475 325 435 328" fill="none" stroke="#1c1c1c" stroke-width="1.85" stroke-linecap="round" stroke-linejoin="round" vector-effect="non-scaling-stroke"/>
<path d="M 262 142 C 245 215 200 265 130 303" fill="none" stroke="#1c1c1c" stroke-width="1.85" stroke-linecap="round" stroke-linejoin="round" vector-effect="non-scaling-stroke"/>
<path d="M 645 142 C 662 215 707 265 778 303" fill="none" stroke="#1c1c1c" stroke-width="1.85" stroke-linecap="round" stroke-linejoin="round" vector-effect="non-scaling-stroke"/>
</g>
<g transform="translate(220,945) scale(0.187542)">
<path d="M 120 90 H 462 L 465 115 H 655 L 650 600 C 650 680 670 730 700 770 L 1030 1150 C 1075 1210 1075 1330 1020 1385 C 985 1415 900 1415 800 1385 C 760 1392 700 1392 620 1350 C 560 1310 400 1120 330 1040 C 290 1000 250 990 200 970 C 120 930 90 870 98 800 C 102 750 122 700 125 600 L 120 183 Z" fill="#e6e6e6" stroke="#868686" stroke-width="9.90" stroke-linejoin="round" vector-effect="non-scaling-stroke"/>
<path d="M 120 90 H 462 L 465 115 H 655 L 650 600 C 650 680 670 730 700 770 L 1030 1150 C 1075 1210 1075 1330 1020 1385 C 985 1415 900 1415 800 1385 C 760 1392 700 1392 620 1350 C 560 1310 400 1120 330 1040 C 290 1000 250 990 200 970 C 120 930 90 870 98 800 C 102 750 122 700 125 600 L 120 183 Z" fill="#e6e6e6" stroke="#e6e6e6" stroke-width="7.70" stroke-linejoin="round" vector-effect="non-scaling-stroke"/>
<path d="M 120 90 H 462 L 465 115 H 655 L 650 600 C 650 680 670 730 700 770 L 1030 1150 C 1075 1210 1075 1330 1020 1385 C 985 1415 900 1415 800 1385 C 760 1392 700 1392 620 1350 C 560 1310 400 1120 330 1040 C 290 1000 250 990 200 970 C 120 930 90 870 98 800 C 102 750 122 700 125 600 L 120 183 Z" fill="#e0e0e0" stroke="#1c1c1c" stroke-width="1.85" stroke-linejoin="round" vector-effect="non-scaling-stroke"/>
<path d="M 122 183 H 460" fill="none" stroke="#1c1c1c" stroke-width="1.85" stroke-linecap="round" stroke-linejoin="round" vector-effect="non-scaling-stroke"/>
<path d="M 465 208 H 653" fill="none" stroke="#1c1c1c" stroke-width="1.85" stroke-linecap="round" stroke-linejoin="round" vector-effect="non-scaling-stroke"/>
<path d="M 462 90 V 600 C 465 700 490 760 530 800 L 840 1120 C 880 1170 880 1290 830 1350 C 800 1380 760 1392 720 1385" fill="none" stroke="#1c1c1c" stroke-width="1.85" stroke-linecap="round" stroke-linejoin="round" vector-effect="non-scaling-stroke"/>
<path d="M 100 780 C 170 770 240 780 305 800 C 290 870 255 930 225 985" fill="none" stroke="#1c1c1c" stroke-width="1.85" stroke-linecap="round" stroke-linejoin="round" vector-effect="non-scaling-stroke"/>
<path d="M 612 1345 C 640 1230 740 1150 848 1145" fill="none" stroke="#1c1c1c" stroke-width="1.85" stroke-linecap="round" stroke-linejoin="round" vector-effect="non-scaling-stroke"/>
<path d="M 872 1232 C 910 1190 970 1170 1040 1168" fill="none" stroke="#1c1c1c" stroke-width="1.85" stroke-linecap="round" stroke-linejoin="round" vector-effect="non-scaling-stroke"/>
</g>
<g transform="translate(535,985) scale(0.149740)">
<path d="M 125 102 H 1395 L 1420 478 C 1300 700 1150 900 1020 1052 H 500 C 350 880 200 650 100 478 Z" fill="#e6e6e6" stroke="#868686" stroke-width="9.90" stroke-linejoin="round" vector-effect="non-scaling-stroke"/>
<path d="M 125 102 H 1395 L 1420 478 C 1300 700 1150 900 1020 1052 H 500 C 350 880 200 650 100 478 Z" fill="#e6e6e6" stroke="#e6e6e6" stroke-width="7.70" stroke-linejoin="round" vector-effect="non-scaling-stroke"/>
<path d="M 125 102 H 1395 L 1420 478 C 1300 700 1150 900 1020 1052 H 500 C 350 880 200 650 100 478 Z" fill="#e0e0e0" stroke="#1c1c1c" stroke-width="1.95" stroke-linejoin="round" vector-effect="non-scaling-stroke"/>
<path d="M 120 215 H 1400" fill="none" stroke="#1c1c1c" stroke-width="1.95" stroke-linecap="round" stroke-linejoin="round" vector-effect="non-scaling-stroke"/>
<path d="M 100 478 C 350 390 620 600 612 810 C 608 900 560 980 500 1052" fill="none" stroke="#1c1c1c" stroke-width="1.95" stroke-linecap="round" stroke-linejoin="round" vector-effect="non-scaling-stroke"/>
<path d="M 1420 478 C 1170 390 900 600 910 810 C 915 900 960 980 1020 1052" fill="none" stroke="#1c1c1c" stroke-width="1.95" stroke-linecap="round" stroke-linejoin="round" vector-effect="non-scaling-stroke"/>
<path d="M 638 912 H 890" fill="none" stroke="#1c1c1c" stroke-width="1.95" stroke-linecap="round" stroke-linejoin="round" vector-effect="non-scaling-stroke"/>
</g>
<g transform="translate(815,995) scale(0.150703)">
<path d="M 280 100 C 600 112 900 112 1225 100 L 1250 128 L 1290 228 C 1350 420 1395 900 1422 1325 C 1200 1350 1000 1380 800 1405 C 780 1380 765 1320 757 1245 C 748 1320 738 1380 715 1405 C 500 1390 300 1360 92 1330 C 100 900 150 420 225 215 L 250 128 Z" fill="#e6e6e6" stroke="#777777" stroke-width="6.70" stroke-linejoin="round" vector-effect="non-scaling-stroke"/>
<path d="M 280 100 C 600 112 900 112 1225 100 L 1250 128 L 1290 228 C 1350 420 1395 900 1422 1325 C 1200 1350 1000 1380 800 1405 C 780 1380 765 1320 757 1245 C 748 1320 738 1380 715 1405 C 500 1390 300 1360 92 1330 C 100 900 150 420 225 215 L 250 128 Z" fill="#e6e6e6" stroke="#e6e6e6" stroke-width="4.50" stroke-linejoin="round" vector-effect="non-scaling-stroke"/>
<clipPath id="clip_shorts"><path d="M 280 100 C 600 112 900 112 1225 100 L 1250 128 L 1290 228 C 1350 420 1395 900 1422 1325 C 1200 1350 1000 1380 800 1405 C 780 1380 765 1320 757 1245 C 748 1320 738 1380 715 1405 C 500 1390 300 1360 92 1330 C 100 900 150 420 225 215 L 250 128 Z"/></clipPath>
<path d="M 280 100 C 600 112 900 112 1225 100 L 1250 128 L 1290 228 C 1350 420 1395 900 1422 1325 C 1200 1350 1000 1380 800 1405 C 780 1380 765 1320 757 1245 C 748 1320 738 1380 715 1405 C 500 1390 300 1360 92 1330 C 100 900 150 420 225 215 L 250 128 Z" fill="#e0e0e0" stroke="#1c1c1c" stroke-width="1.9" stroke-linejoin="round" vector-effect="non-scaling-stroke"/>
<g clip-path="url(#clip_shorts)">
<path d="M 250 128 C 400 200 560 235 730 238 C 900 235 1080 200 1250 128" fill="none" stroke="#1c1c1c" stroke-width="4.4" stroke-linecap="round" stroke-linejoin="round" vector-effect="non-scaling-stroke"/>
<path d="M 225 218 C 400 300 560 345 720 348 C 900 345 1100 300 1290 228" fill="none" stroke="#1c1c1c" stroke-width="4.4" stroke-linecap="round" stroke-linejoin="round" vector-effect="non-scaling-stroke"/>
<path d="M 702 362 C 650 450 640 540 699 626" fill="none" stroke="#1c1c1c" stroke-width="4.4" stroke-linecap="round" stroke-linejoin="round" vector-effect="non-scaling-stroke"/>
<path d="M 770 362 C 772 430 775 462 810 487 C 862 522 878 562 808 635" fill="none" stroke="#1c1c1c" stroke-width="4.4" stroke-linecap="round" stroke-linejoin="round" vector-effect="non-scaling-stroke"/>
</g>
<path d="M 250 128 C 400 200 560 235 730 238 C 900 235 1080 200 1250 128" fill="none" stroke="#e6e6e6" stroke-width="1.6" stroke-linecap="round" stroke-linejoin="round" vector-effect="non-scaling-stroke"/>
<path d="M 225 218 C 400 300 560 345 720 348 C 900 345 1100 300 1290 228" fill="none" stroke="#e6e6e6" stroke-width="1.6" stroke-linecap="round" stroke-linejoin="round" vector-effect="non-scaling-stroke"/>
<path d="M 702 362 C 650 450 640 540 699 626" fill="none" stroke="#e6e6e6" stroke-width="1.6" stroke-linecap="round" stroke-linejoin="round" vector-effect="non-scaling-stroke"/>
<path d="M 770 362 C 772 430 775 462 810 487 C 862 522 878 562 808 635" fill="none" stroke="#e6e6e6" stroke-width="1.6" stroke-linecap="round" stroke-linejoin="round" vector-effect="non-scaling-stroke"/>
<path d="M 714 350 C 706 325 708 302 720 288 C 727 296 733 303 740 304 H 756 C 763 303 769 296 776 288 C 790 302 792 328 784 350 C 762 358 736 358 714 350 Z" fill="#e0e0e0" stroke="#1c1c1c" stroke-width="1.7" stroke-linejoin="round" vector-effect="non-scaling-stroke"/>
</g>
</svg><div class="a" style="left:116px;top:1426px;width:134px;height:38px;border-radius:19px;background:rgba(228,228,228,0.62)"></div>
<svg style="left:0;top:0" width="1536" height="1493" viewBox="0 0 1536 1493" fill="none" stroke="#c3c5c9" stroke-width="1.6">
<circle cx="134.8" cy="1445.5" r="10.6"/><path d="M129 1445.5 H140.6"/>
<circle cx="231" cy="1445.5" r="10.6"/><path d="M225.2 1445.5 H236.8 M231 1439.7 V1451.3"/>
</svg>
<div class="t" style="left:154.5px;top:1434.7px;font-size:22px;line-height:22px;color:#c3c5c9;font-weight:400;letter-spacing:-0.2px;-webkit-text-stroke:0.7px #c3c5c9">125%</div>
<div class="a" style="left:-6px;top:1487px;width:12px;height:12px;border-radius:6px;background:#356399"></div>
<div class="a" style="left:1534.5px;top:154px;width:1.5px;height:7px;background:#333"></div>
<div class="a" style="left:1534.5px;top:405px;width:1.5px;height:14px;background:#444"></div>
<div class="a" style="left:1534.5px;top:424px;width:1.5px;height:18px;background:#111"></div>
<div class="a" style="left:1534.5px;top:530px;width:1.5px;height:2px;background:#333"></div>
<div class="a" style="left:1184px;top:59px;width:3px;height:1434px;background:#fdfdfd"></div><div class="a" style="left:1186.5px;top:59px;width:1px;height:1434px;background:#e6e6e6"></div><div class="a" style="left:1187.5px;top:59px;width:346.5px;height:1434px;background:#fff"></div><div class="t" style="left:1207.0px;top:79.2px;font-size:17px;line-height:17px;color:#3e8159;font-weight:400;-webkit-text-stroke:0.35px #3e8159">Layers</div>

<div class="a" style="left:1188.5px;top:111px;width:87px;height:3px;background:#3e8159"></div>
<div class="t" style="left:1293.5px;top:79.2px;font-size:17px;line-height:17px;color:#3a3a3a;font-weight:400;">Color Sync</div>

<div class="a" style="left:1188px;top:114px;width:346px;height:1px;background:#e2e2e2"></div>
<div class="a" style="left:1188px;top:170px;width:346px;height:1px;background:#e6e6e6"></div>
<svg style="left:0;top:0" width="1536" height="1493" viewBox="0 0 1536 1493" fill="none" stroke-linecap="butt">
<path d="M1211.5 137 V132.5 H1216 M1226 132.5 H1230.5 V137 M1230.5 147 V152 H1226 M1216 152 H1211.5 V147" stroke="#d6d6d6" stroke-width="1.4"/>
<rect x="1215" y="136.5" width="8.5" height="7.5" rx="1.2" stroke="#d6d6d6" stroke-width="1.4"/><rect x="1218.8" y="140.5" width="8.5" height="7.5" rx="1.2" stroke="#d6d6d6" stroke-width="1.4" fill="#fff"/>
<path d="M1262 147 H1257.5 V132.5 H1271.5 V137" stroke="#d6d6d6" stroke-width="1.4"/><rect x="1262" y="137" width="14.5" height="15" stroke="#d6d6d6" stroke-width="1.4"/><path d="M1265 144.5 H1273.5 M1269.2 140.3 V148.8" stroke="#d6d6d6" stroke-width="1.2"/>
<path d="M1302.5 136 H1324" stroke="#d6d6d6" stroke-width="1.4"/><path d="M1308 136 V132.5 H1318 V136" stroke="#d6d6d6" stroke-width="1.4"/><path d="M1304.5 136.5 L1305.5 148 C1305.8 150.5 1307 152 1309.5 152 H1316.5 C1319 152 1320.2 150.5 1320.5 148 L1321.5 136.5" stroke="#d6d6d6" stroke-width="1.4"/><path d="M1311 141 V148 M1315.5 141 V148" stroke="#d6d6d6" stroke-width="1.3"/>

<path d="M1206.5 206.4 L1212 212.0 L1217.5 206.4" stroke="#333" stroke-width="1.7" stroke-linecap="round" stroke-linejoin="round"/>
<path d="M1249 216.0 H1239.5 C1236 216.0 1233.5 213.5 1233.5 210.0 C1233.5 206.5 1236 204.0 1239.5 204.0 H1250 C1253 204.0 1255 206.0 1255 208.7 C1255 211.5 1253 213.2 1250 213.2 H1241 C1239.5 213.2 1238.5 212.0 1238.5 210.5 C1238.5 209.0 1239.5 207.8 1241 207.8 H1250" stroke="#444" stroke-width="1.7" stroke-linecap="round"/>
<g transform="translate(1267.5716034271725,261.6) scale(0.11016) translate(-233,-277.5)"><g transform="translate(220,260) scale(0.180844)"><path d="M 402 295 L 554 202 C 545 225 542 245 542.2 262.7 C 540 300 539 330 539.2 351.6 C 540 365 548 371 557 370.9 L 616.2 370.9 L 610.3 419.8 C 611 432 615 440 622.2 443.5 L 711.1 493.9 C 720 499 728 505 730 515 L 730 1430 L 402 1430 L 410.9 662.7 C 435 580 452 510 449.4 458.3 C 446 390 425 335 402 295 Z" fill="#fff" stroke="#c4c4c4" stroke-width="0.7" stroke-linejoin="round" vector-effect="non-scaling-stroke"/><path d="M 1088.0 295.0 L 936.0 202.0 C 945.0 225.0 948.0 245.0 947.8 262.7 C 950.0 300.0 951.0 330.0 950.8 351.6 C 950.0 365.0 942.0 371.0 933.0 370.9 L 873.8 370.9 L 879.7 419.8 C 879.0 432.0 875.0 440.0 867.8 443.5 L 778.9 493.9 C 770.0 499.0 762.0 505.0 760.0 515.0 L 760.0 1430.0 L 1088.0 1430.0 L 1079.1 662.7 C 1055.0 580.0 1038.0 510.0 1040.6 458.3 C 1044.0 390.0 1065.0 335.0 1088.0 295.0 Z" fill="#fff" stroke="#c4c4c4" stroke-width="0.7" stroke-linejoin="round" vector-effect="non-scaling-stroke"/><path d="M 389 325 C 415 380 428 430 422.8 458.3 C 420 540 400 610 387.2 662.7 L 381.3 1227.4 L 335.3 1304.4 L 113 1218.5 Z" fill="#fff" stroke="#c4c4c4" stroke-width="0.7" stroke-linejoin="round" vector-effect="non-scaling-stroke"/><path d="M 1101.0 325.0 C 1075.0 380.0 1062.0 430.0 1067.2 458.3 C 1070.0 540.0 1090.0 610.0 1102.8 662.7 L 1108.7 1227.4 L 1154.7 1304.4 L 1377.0 1218.5 Z" fill="#fff" stroke="#c4c4c4" stroke-width="0.7" stroke-linejoin="round" vector-effect="non-scaling-stroke"/><path d="M 104.2 1245.2 L 322 1331 L 304.2 1363.7 L 93.8 1283.7 Z" fill="#fff" stroke="#c4c4c4" stroke-width="0.7" stroke-linejoin="round" vector-effect="non-scaling-stroke"/><path d="M 1385.8 1245.2 L 1168.0 1331.0 L 1185.8 1363.7 L 1396.2 1283.7 Z" fill="#fff" stroke="#c4c4c4" stroke-width="0.7" stroke-linejoin="round" vector-effect="non-scaling-stroke"/><path d="M 629.6 138.3 C 586.6 167.9 568.8 233.1 567.3 344.2 L 634 344.2 C 641 346 644.4 351.6 642.9 363.5 L 637 416.8 L 728.8 473.1 C 675.5 381.3 625.1 322 622.2 233.1 C 621 190 625 160 629.6 138.3 Z" fill="#fff" stroke="#c4c4c4" stroke-width="0.7" stroke-linejoin="round" vector-effect="non-scaling-stroke"/><path d="M 860.4 138.3 C 903.4 167.9 921.2 233.1 922.7 344.2 L 856.0 344.2 C 849.0 346.0 845.6 351.6 847.1 363.5 L 853.0 416.8 L 761.2 473.1 C 814.5 381.3 864.9 322.0 867.8 233.1 C 869.0 190.0 865.0 160.0 860.4 138.3 Z" fill="#fff" stroke="#c4c4c4" stroke-width="0.7" stroke-linejoin="round" vector-effect="non-scaling-stroke"/><path d="M 657.7 122 L 826.6 122 L 830.2 162.6 L 801.5 162.6 C 789.6 163.5 789.6 187.2 801.5 188.7 L 830.2 188.7 C 832.6 277.6 794 351.6 743.6 437.6 C 693.3 351.6 653.3 277.6 654.2 190.1 L 768.9 190.1 C 783.7 188.7 783.7 163.5 768.9 162.6 L 656.2 162.6 Z" fill="#fff" stroke="#c4c4c4" stroke-width="0.7" stroke-linejoin="round" vector-effect="non-scaling-stroke"/></g></g>
<g transform="translate(1267.5716034271725,326.7) scale(0.11016) translate(-233,-277.5)"><g transform="translate(220,260) scale(0.180844)"><path d="M 657.7 122 L 826.6 122 L 860 138 C 903 168 921 233 923 290 L 1088 295 L 1377 1218.5 L 1396 1283.7 L 1185.8 1363.7 L 1108.7 1272 L 1088 1430 L 402 1430 L 381.3 1272 L 304.2 1363.7 L 93.8 1283.7 L 113 1218.5 L 402 295 L 554 202 C 560 170 590 140 629.6 128 Z" fill="#dedede" stroke="#dedede" stroke-width="1.5" stroke-linejoin="round" vector-effect="non-scaling-stroke"/></g></g>
<path d="M1206.5 401.7 L1212 407.3 L1217.5 401.7" stroke="#333" stroke-width="1.7" stroke-linecap="round" stroke-linejoin="round"/>
<path d="M1249 411.3 H1239.5 C1236 411.3 1233.5 408.8 1233.5 405.3 C1233.5 401.8 1236 399.3 1239.5 399.3 H1250 C1253 399.3 1255 401.3 1255 404.0 C1255 406.8 1253 408.5 1250 408.5 H1241 C1239.5 408.5 1238.5 407.3 1238.5 405.8 C1238.5 404.3 1239.5 403.1 1241 403.1 H1250" stroke="#444" stroke-width="1.7" stroke-linecap="round"/>
<g transform="translate(1267.2294721407625,456.9) scale(0.13196) translate(-824.8,-1005.9)"><g transform="translate(815,995) scale(0.150703)"><path d="M 280 100 C 600 112 900 112 1225 100 L 1250 128 L 1290 228 C 1350 420 1395 900 1422 1325 C 1200 1350 1000 1380 800 1405 C 780 1380 765 1320 757 1245 C 748 1320 738 1380 715 1405 C 500 1390 300 1360 92 1330 C 100 900 150 420 225 215 L 250 128 Z" fill="#fff" stroke="#c4c4c4" stroke-width="0.8" stroke-linejoin="round" vector-effect="non-scaling-stroke"/><path d="M 250 128 C 400 200 560 235 730 238 C 900 235 1080 200 1250 128" fill="none" stroke="#cfcfcf" stroke-width="0.6" vector-effect="non-scaling-stroke"/><path d="M 225 218 C 400 300 560 345 720 348 C 900 345 1100 300 1290 228" fill="none" stroke="#cfcfcf" stroke-width="0.6" vector-effect="non-scaling-stroke"/><path d="M 740 295 C 720 290 712 310 718 330 C 722 345 735 350 745 348 C 760 350 775 340 780 320 C 785 300 770 290 760 295" fill="none" stroke="#cfcfcf" stroke-width="0.6" vector-effect="non-scaling-stroke"/><path d="M 712 360 C 660 430 630 520 700 625" fill="none" stroke="#cfcfcf" stroke-width="0.6" vector-effect="non-scaling-stroke"/><path d="M 770 360 C 800 430 880 480 808 635" fill="none" stroke="#cfcfcf" stroke-width="0.6" vector-effect="non-scaling-stroke"/></g></g>
<g transform="translate(1267.2294721407625,522.0) scale(0.13196) translate(-824.8,-1005.9)"><g transform="translate(815,995) scale(0.150703)"><path d="M 280 100 C 600 112 900 112 1225 100 L 1250 128 L 1290 228 C 1350 420 1395 900 1422 1325 C 1200 1350 1000 1380 800 1405 C 780 1380 765 1320 757 1245 C 748 1320 738 1380 715 1405 C 500 1390 300 1360 92 1330 C 100 900 150 420 225 215 L 250 128 Z" fill="#dedede" stroke="#dedede" stroke-width="1.5" stroke-linejoin="round" vector-effect="non-scaling-stroke"/></g></g>
<path d="M1206.5 597.0 L1212 602.6 L1217.5 597.0" stroke="#333" stroke-width="1.7" stroke-linecap="round" stroke-linejoin="round"/>
<g transform="translate(1232.6238408037095,587.0999999999999) scale(0.10240) translate(-525.3,-267.2)"><g transform="translate(515,255) scale(0.187542)"><path d="M 490 100 C 590 118 700 118 800 100 L 1070 262 C 1110 330 1160 450 1212 590 C 1225 620 1220 640 1200 650 L 990 712 C 965 718 960 700 960 680 L 962 1000 L 968 1340 C 970 1390 940 1412 890 1412 L 410 1412 C 350 1412 325 1390 327 1340 L 342 1000 L 338 680 C 338 700 332 718 305 712 L 95 645 C 78 638 75 620 85 595 C 135 450 180 330 215 262 Z" fill="#dcdcdc" stroke="#c9c9c9" stroke-width="0.8" stroke-linejoin="round" vector-effect="non-scaling-stroke"/><path d="M 490 100 C 480 140 500 165 540 195 C 600 258 700 268 760 195 C 790 165 810 140 800 100" fill="none" stroke="#c9c9c9" stroke-width="0.6" vector-effect="non-scaling-stroke"/><path d="M 490 168 C 420 210 300 290 275 345 C 265 380 270 420 290 480 L 340 645" fill="none" stroke="#c9c9c9" stroke-width="0.6" vector-effect="non-scaling-stroke"/><path d="M 800 168 C 880 210 990 290 1015 345 C 1025 385 1020 420 1000 480 L 960 645" fill="none" stroke="#c9c9c9" stroke-width="0.6" vector-effect="non-scaling-stroke"/><path d="M 90 598 C 170 630 260 660 338 668" fill="none" stroke="#c9c9c9" stroke-width="0.6" vector-effect="non-scaling-stroke"/><path d="M 1212 590 C 1130 630 1040 660 960 668" fill="none" stroke="#c9c9c9" stroke-width="0.6" vector-effect="non-scaling-stroke"/><path d="M 345 1010 C 400 1200 460 1330 510 1412" fill="none" stroke="#c9c9c9" stroke-width="0.6" vector-effect="non-scaling-stroke"/><path d="M 950 1010 C 900 1200 840 1330 790 1412" fill="none" stroke="#c9c9c9" stroke-width="0.6" vector-effect="non-scaling-stroke"/></g></g>
<g transform="translate(1269.4091962905718,652.1999999999999) scale(0.10433) translate(-525.3,-267.2)"><g transform="translate(515,255) scale(0.187542)"><path d="M 490 100 C 590 118 700 118 800 100 L 1070 262 C 1110 330 1160 450 1212 590 C 1225 620 1220 640 1200 650 L 990 712 C 965 718 960 700 960 680 L 962 1000 L 968 1340 C 970 1390 940 1412 890 1412 L 410 1412 C 350 1412 325 1390 327 1340 L 342 1000 L 338 680 C 338 700 332 718 305 712 L 95 645 C 78 638 75 620 85 595 C 135 450 180 330 215 262 Z" fill="#fff" stroke="#c4c4c4" stroke-width="0.8" stroke-linejoin="round" vector-effect="non-scaling-stroke"/><path d="M 490 100 C 480 140 500 165 540 195 C 600 258 700 268 760 195 C 790 165 810 140 800 100" fill="none" stroke="#cfcfcf" stroke-width="0.6" vector-effect="non-scaling-stroke"/><path d="M 490 168 C 420 210 300 290 275 345 C 265 380 270 420 290 480 L 340 645" fill="none" stroke="#cfcfcf" stroke-width="0.6" vector-effect="non-scaling-stroke"/><path d="M 800 168 C 880 210 990 290 1015 345 C 1025 385 1020 420 1000 480 L 960 645" fill="none" stroke="#cfcfcf" stroke-width="0.6" vector-effect="non-scaling-stroke"/><path d="M 90 598 C 170 630 260 660 338 668" fill="none" stroke="#cfcfcf" stroke-width="0.6" vector-effect="non-scaling-stroke"/><path d="M 1212 590 C 1130 630 1040 660 960 668" fill="none" stroke="#cfcfcf" stroke-width="0.6" vector-effect="non-scaling-stroke"/><path d="M 345 1010 C 400 1200 460 1330 510 1412" fill="none" stroke="#cfcfcf" stroke-width="0.6" vector-effect="non-scaling-stroke"/><path d="M 950 1010 C 900 1200 840 1330 790 1412" fill="none" stroke="#cfcfcf" stroke-width="0.6" vector-effect="non-scaling-stroke"/></g></g>
<g transform="translate(1269.4091962905718,717.3) scale(0.10433) translate(-525.3,-267.2)"><g transform="translate(515,255) scale(0.187542)"><path d="M 490 100 C 590 118 700 118 800 100 L 1070 262 C 1110 330 1160 450 1212 590 C 1225 620 1220 640 1200 650 L 990 712 C 965 718 960 700 960 680 L 962 1000 L 968 1340 C 970 1390 940 1412 890 1412 L 410 1412 C 350 1412 325 1390 327 1340 L 342 1000 L 338 680 C 338 700 332 718 305 712 L 95 645 C 78 638 75 620 85 595 C 135 450 180 330 215 262 Z" fill="#dedede" stroke="#dedede" stroke-width="1.5" stroke-linejoin="round" vector-effect="non-scaling-stroke"/></g></g>
<path d="M1206.5 792.3 L1212 797.9 L1217.5 792.3" stroke="#333" stroke-width="1.7" stroke-linecap="round" stroke-linejoin="round"/>
<g transform="translate(1236.5660347043702,782.4) scale(0.08515) translate(-842.8,-598.8)"><g transform="translate(830,590) scale(0.221031)"><path d="M 180 62 H 730 C 758 62 772 80 772 105 L 828 1385 C 830 1410 815 1425 790 1425 H 535 C 510 1425 497 1410 495 1390 L 460 600 C 458 590 450 588 446 592 L 412 1390 C 410 1412 395 1425 370 1425 H 115 C 92 1425 78 1410 80 1385 L 135 105 C 137 80 150 62 180 62 Z" fill="#dcdcdc" stroke="#c9c9c9" stroke-width="0.8" stroke-linejoin="round" vector-effect="non-scaling-stroke"/><path d="M 135 140 H 772" fill="none" stroke="#c9c9c9" stroke-width="0.6" vector-effect="non-scaling-stroke"/><path d="M 432 62 V 565 C 432 580 438 588 450 592" fill="none" stroke="#c9c9c9" stroke-width="0.6" vector-effect="non-scaling-stroke"/><path d="M 508 142 V 260 C 508 300 475 325 435 328" fill="none" stroke="#c9c9c9" stroke-width="0.6" vector-effect="non-scaling-stroke"/><path d="M 262 142 C 245 215 200 265 130 303" fill="none" stroke="#c9c9c9" stroke-width="0.6" vector-effect="non-scaling-stroke"/><path d="M 645 142 C 662 215 707 265 778 303" fill="none" stroke="#c9c9c9" stroke-width="0.6" vector-effect="non-scaling-stroke"/></g></g>
<g transform="translate(1273.4257712082263,847.5) scale(0.08676) translate(-842.8,-598.8)"><g transform="translate(830,590) scale(0.221031)"><path d="M 180 62 H 730 C 758 62 772 80 772 105 L 828 1385 C 830 1410 815 1425 790 1425 H 535 C 510 1425 497 1410 495 1390 L 460 600 C 458 590 450 588 446 592 L 412 1390 C 410 1412 395 1425 370 1425 H 115 C 92 1425 78 1410 80 1385 L 135 105 C 137 80 150 62 180 62 Z" fill="#fff" stroke="#c4c4c4" stroke-width="0.8" stroke-linejoin="round" vector-effect="non-scaling-stroke"/><path d="M 135 140 H 772" fill="none" stroke="#cfcfcf" stroke-width="0.6" vector-effect="non-scaling-stroke"/><path d="M 432 62 V 565 C 432 580 438 588 450 592" fill="none" stroke="#cfcfcf" stroke-width="0.6" vector-effect="non-scaling-stroke"/><path d="M 508 142 V 260 C 508 300 475 325 435 328" fill="none" stroke="#cfcfcf" stroke-width="0.6" vector-effect="non-scaling-stroke"/><path d="M 262 142 C 245 215 200 265 130 303" fill="none" stroke="#cfcfcf" stroke-width="0.6" vector-effect="non-scaling-stroke"/><path d="M 645 142 C 662 215 707 265 778 303" fill="none" stroke="#cfcfcf" stroke-width="0.6" vector-effect="non-scaling-stroke"/></g></g>
<g transform="translate(1273.4257712082263,912.5999999999999) scale(0.08676) translate(-842.8,-598.8)"><g transform="translate(830,590) scale(0.221031)"><path d="M 180 62 H 730 C 758 62 772 80 772 105 L 828 1385 C 830 1410 815 1425 790 1425 H 535 C 510 1425 497 1410 495 1390 L 460 600 C 458 590 450 588 446 592 L 412 1390 C 410 1412 395 1425 370 1425 H 115 C 92 1425 78 1410 80 1385 L 135 105 C 137 80 150 62 180 62 Z" fill="#dedede" stroke="#dedede" stroke-width="1.5" stroke-linejoin="round" vector-effect="non-scaling-stroke"/></g></g>
<path d="M1206.5 987.6 L1212 993.2 L1217.5 987.6" stroke="#333" stroke-width="1.7" stroke-linecap="round" stroke-linejoin="round"/>
<g transform="translate(1230.1776745354093,977.6999999999999) scale(0.13310) translate(-813.2,-307)"><g transform="translate(800,295) scale(0.149740)"><path d="M 300 112 H 1268 C 1310 112 1342 140 1345 185 L 1445 1320 C 1448 1360 1420 1382 1385 1382 H 905 C 878 1382 860 1360 855 1335 L 795 1060 C 790 1045 775 1045 770 1060 L 712 1330 C 705 1360 685 1382 650 1382 H 180 C 140 1382 118 1355 120 1320 L 218 185 C 222 140 255 112 300 112 Z" fill="#dcdcdc" stroke="#c9c9c9" stroke-width="0.8" stroke-linejoin="round" vector-effect="non-scaling-stroke"/><path d="M 215 250 H 1350" fill="none" stroke="#c9c9c9" stroke-width="0.6" vector-effect="non-scaling-stroke"/><path d="M 750 112 V 780" fill="none" stroke="#c9c9c9" stroke-width="0.6" vector-effect="non-scaling-stroke"/><path d="M 885 252 V 640 C 885 720 820 775 750 780" fill="none" stroke="#c9c9c9" stroke-width="0.6" vector-effect="non-scaling-stroke"/><path d="M 445 255 C 420 390 320 490 190 555" fill="none" stroke="#c9c9c9" stroke-width="0.6" vector-effect="non-scaling-stroke"/><path d="M 1118 255 C 1145 390 1245 490 1375 555" fill="none" stroke="#c9c9c9" stroke-width="0.6" vector-effect="non-scaling-stroke"/></g></g>
<g transform="translate(1266.9168759417378,1042.8) scale(0.13561) translate(-813.2,-307)"><g transform="translate(800,295) scale(0.149740)"><path d="M 300 112 H 1268 C 1310 112 1342 140 1345 185 L 1445 1320 C 1448 1360 1420 1382 1385 1382 H 905 C 878 1382 860 1360 855 1335 L 795 1060 C 790 1045 775 1045 770 1060 L 712 1330 C 705 1360 685 1382 650 1382 H 180 C 140 1382 118 1355 120 1320 L 218 185 C 222 140 255 112 300 112 Z" fill="#fff" stroke="#c4c4c4" stroke-width="0.8" stroke-linejoin="round" vector-effect="non-scaling-stroke"/><path d="M 215 250 H 1350" fill="none" stroke="#cfcfcf" stroke-width="0.6" vector-effect="non-scaling-stroke"/><path d="M 750 112 V 780" fill="none" stroke="#cfcfcf" stroke-width="0.6" vector-effect="non-scaling-stroke"/><path d="M 885 252 V 640 C 885 720 820 775 750 780" fill="none" stroke="#cfcfcf" stroke-width="0.6" vector-effect="non-scaling-stroke"/><path d="M 445 255 C 420 390 320 490 190 555" fill="none" stroke="#cfcfcf" stroke-width="0.6" vector-effect="non-scaling-stroke"/><path d="M 1118 255 C 1145 390 1245 490 1375 555" fill="none" stroke="#cfcfcf" stroke-width="0.6" vector-effect="non-scaling-stroke"/></g></g>
<g transform="translate(1266.9168759417378,1107.8999999999999) scale(0.13561) translate(-813.2,-307)"><g transform="translate(800,295) scale(0.149740)"><path d="M 300 112 H 1268 C 1310 112 1342 140 1345 185 L 1445 1320 C 1448 1360 1420 1382 1385 1382 H 905 C 878 1382 860 1360 855 1335 L 795 1060 C 790 1045 775 1045 770 1060 L 712 1330 C 705 1360 685 1382 650 1382 H 180 C 140 1382 118 1355 120 1320 L 218 185 C 222 140 255 112 300 112 Z" fill="#dedede" stroke="#dedede" stroke-width="1.5" stroke-linejoin="round" vector-effect="non-scaling-stroke"/></g></g>
<path d="M1206.5 1182.9 L1212 1188.5 L1217.5 1182.9" stroke="#333" stroke-width="1.7" stroke-linecap="round" stroke-linejoin="round"/>
<g transform="translate(1231.6773975251353,1173.0) scale(0.10247) translate(-528.4,-603.4)"><g transform="translate(515,590) scale(0.190891)"><path d="M 555 100 C 600 160 660 175 710 175 C 760 175 820 160 845 100 L 1072 225 C 1090 260 1110 330 1125 470 L 1300 1235 C 1305 1260 1295 1285 1282 1298 L 1290 1372 L 1170 1395 L 1150 1322 C 1110 1300 1085 1240 1070 1195 L 1048 1208 L 1040 1285 H 365 L 355 1208 L 335 1195 C 320 1240 295 1300 255 1322 L 235 1395 L 112 1372 L 120 1298 C 105 1285 95 1260 100 1235 L 275 470 C 290 330 310 260 330 222 Z" fill="#dcdcdc" stroke="#c9c9c9" stroke-width="0.8" stroke-linejoin="round" vector-effect="non-scaling-stroke"/><path d="M 505 130 C 560 200 640 228 710 228 C 780 228 860 200 895 130" fill="none" stroke="#c9c9c9" stroke-width="0.6" vector-effect="non-scaling-stroke"/><path d="M 372 330 C 360 520 330 900 325 1030 C 322 1120 330 1180 340 1200" fill="none" stroke="#c9c9c9" stroke-width="0.6" vector-effect="non-scaling-stroke"/><path d="M 1030 330 C 1040 520 1070 900 1075 1030 C 1078 1120 1070 1180 1060 1200" fill="none" stroke="#c9c9c9" stroke-width="0.6" vector-effect="non-scaling-stroke"/><path d="M 272 472 L 355 520" fill="none" stroke="#c9c9c9" stroke-width="0.6" vector-effect="non-scaling-stroke"/><path d="M 1128 472 L 1045 520" fill="none" stroke="#c9c9c9" stroke-width="0.6" vector-effect="non-scaling-stroke"/><path d="M 335 1200 H 1070" fill="none" stroke="#c9c9c9" stroke-width="0.6" vector-effect="non-scaling-stroke"/><path d="M 120 1298 C 170 1312 215 1322 258 1322" fill="none" stroke="#c9c9c9" stroke-width="0.6" vector-effect="non-scaling-stroke"/><path d="M 1282 1298 C 1232 1312 1187 1322 1145 1322" fill="none" stroke="#c9c9c9" stroke-width="0.6" vector-effect="non-scaling-stroke"/></g></g>
<g transform="translate(1268.4448955916473,1238.1) scale(0.10441) translate(-528.4,-603.4)"><g transform="translate(515,590) scale(0.190891)"><path d="M 555 100 C 600 160 660 175 710 175 C 760 175 820 160 845 100 L 1072 225 C 1090 260 1110 330 1125 470 L 1300 1235 C 1305 1260 1295 1285 1282 1298 L 1290 1372 L 1170 1395 L 1150 1322 C 1110 1300 1085 1240 1070 1195 L 1048 1208 L 1040 1285 H 365 L 355 1208 L 335 1195 C 320 1240 295 1300 255 1322 L 235 1395 L 112 1372 L 120 1298 C 105 1285 95 1260 100 1235 L 275 470 C 290 330 310 260 330 222 Z" fill="#fff" stroke="#c4c4c4" stroke-width="0.8" stroke-linejoin="round" vector-effect="non-scaling-stroke"/><path d="M 505 130 C 560 200 640 228 710 228 C 780 228 860 200 895 130" fill="none" stroke="#cfcfcf" stroke-width="0.6" vector-effect="non-scaling-stroke"/><path d="M 372 330 C 360 520 330 900 325 1030 C 322 1120 330 1180 340 1200" fill="none" stroke="#cfcfcf" stroke-width="0.6" vector-effect="non-scaling-stroke"/><path d="M 1030 330 C 1040 520 1070 900 1075 1030 C 1078 1120 1070 1180 1060 1200" fill="none" stroke="#cfcfcf" stroke-width="0.6" vector-effect="non-scaling-stroke"/><path d="M 272 472 L 355 520" fill="none" stroke="#cfcfcf" stroke-width="0.6" vector-effect="non-scaling-stroke"/><path d="M 1128 472 L 1045 520" fill="none" stroke="#cfcfcf" stroke-width="0.6" vector-effect="non-scaling-stroke"/><path d="M 335 1200 H 1070" fill="none" stroke="#cfcfcf" stroke-width="0.6" vector-effect="non-scaling-stroke"/><path d="M 120 1298 C 170 1312 215 1322 258 1322" fill="none" stroke="#cfcfcf" stroke-width="0.6" vector-effect="non-scaling-stroke"/><path d="M 1282 1298 C 1232 1312 1187 1322 1145 1322" fill="none" stroke="#cfcfcf" stroke-width="0.6" vector-effect="non-scaling-stroke"/></g></g>
<g transform="translate(1268.4448955916473,1303.1999999999998) scale(0.10441) translate(-528.4,-603.4)"><g transform="translate(515,590) scale(0.190891)"><path d="M 555 100 C 600 160 660 175 710 175 C 760 175 820 160 845 100 L 1072 225 C 1090 260 1110 330 1125 470 L 1300 1235 C 1305 1260 1295 1285 1282 1298 L 1290 1372 L 1170 1395 L 1150 1322 C 1110 1300 1085 1240 1070 1195 L 1048 1208 L 1040 1285 H 365 L 355 1208 L 335 1195 C 320 1240 295 1300 255 1322 L 235 1395 L 112 1372 L 120 1298 C 105 1285 95 1260 100 1235 L 275 470 C 290 330 310 260 330 222 Z" fill="#dedede" stroke="#dedede" stroke-width="1.5" stroke-linejoin="round" vector-effect="non-scaling-stroke"/></g></g>
</svg>
<div class="t" style="left:1267.3px;top:202.4px;font-size:17px;line-height:17px;color:#3a3a3a;font-weight:400;-webkit-text-stroke:0.2px #3a3a3a">Attach</div>

<div class="t" style="left:1303.8px;top:267.5px;font-size:17px;line-height:17px;color:#3a3a3a;font-weight:400;-webkit-text-stroke:0.2px #3a3a3a">Pajama Set</div>

<div class="t" style="left:1303.8px;top:332.6px;font-size:17px;line-height:17px;color:#3a3a3a;font-weight:400;-webkit-text-stroke:0.2px #3a3a3a">Offset</div>

<div class="t" style="left:1267.3px;top:397.7px;font-size:17px;line-height:17px;color:#3a3a3a;font-weight:400;-webkit-text-stroke:0.2px #3a3a3a">Attach</div>

<div class="t" style="left:1303.8px;top:462.8px;font-size:17px;line-height:17px;color:#3a3a3a;font-weight:400;-webkit-text-stroke:0.2px #3a3a3a">Swimming Trunks</div>

<div class="t" style="left:1303.8px;top:527.9px;font-size:17px;line-height:17px;color:#3a3a3a;font-weight:400;-webkit-text-stroke:0.2px #3a3a3a">Offset</div>

<div class="t" style="left:1267.3px;top:593.0px;font-size:17px;line-height:17px;color:#3a3a3a;font-weight:400;-webkit-text-stroke:0.2px #3a3a3a">Sport Jersey</div>

<div class="t" style="left:1303.8px;top:658.1px;font-size:17px;line-height:17px;color:#3a3a3a;font-weight:400;-webkit-text-stroke:0.2px #3a3a3a">Sport Jersey</div>

<div class="t" style="left:1303.8px;top:723.2px;font-size:17px;line-height:17px;color:#3a3a3a;font-weight:400;-webkit-text-stroke:0.2px #3a3a3a">Sport Jersey</div>

<div class="t" style="left:1267.3px;top:788.3px;font-size:17px;line-height:17px;color:#3a3a3a;font-weight:400;-webkit-text-stroke:0.2px #3a3a3a">Pants</div>

<div class="t" style="left:1303.8px;top:853.4px;font-size:17px;line-height:17px;color:#3a3a3a;font-weight:400;-webkit-text-stroke:0.2px #3a3a3a">Pants</div>

<div class="t" style="left:1303.8px;top:918.5px;font-size:17px;line-height:17px;color:#3a3a3a;font-weight:400;-webkit-text-stroke:0.2px #3a3a3a">Pants</div>

<div class="t" style="left:1267.3px;top:983.6px;font-size:17px;line-height:17px;color:#3a3a3a;font-weight:400;-webkit-text-stroke:0.2px #3a3a3a">Shorts</div>

<div class="t" style="left:1303.8px;top:1048.7px;font-size:17px;line-height:17px;color:#3a3a3a;font-weight:400;-webkit-text-stroke:0.2px #3a3a3a">Shorts</div>

<div class="t" style="left:1303.8px;top:1113.8px;font-size:17px;line-height:17px;color:#3a3a3a;font-weight:400;-webkit-text-stroke:0.2px #3a3a3a">Shorts</div>

<div class="t" style="left:1267.3px;top:1178.9px;font-size:17px;line-height:17px;color:#3a3a3a;font-weight:400;-webkit-text-stroke:0.2px #3a3a3a">Sweatshirt</div>

<div class="t" style="left:1303.8px;top:1244.0px;font-size:17px;line-height:17px;color:#3a3a3a;font-weight:400;-webkit-text-stroke:0.2px #3a3a3a">Sweatshirt</div>

<div class="t" style="left:1303.8px;top:1309.1px;font-size:17px;line-height:17px;color:#3a3a3a;font-weight:400;-webkit-text-stroke:0.2px #3a3a3a">Sweatshirt</div>

<div class="a" style="left:1188px;top:1323px;width:346px;height:54.5px;background:#f4f4f4"></div>
<div class="a" style="left:1201px;top:1330px;width:58.5px;height:39px;border:1.3px solid #6a6a6a;border-radius:2.5px;background:#fff"></div>
<div class="t" style="left:1272.5px;top:1344.8px;font-size:11.6px;line-height:11.6px;color:#222;font-weight:400;">Blank Canvas</div>

<svg style="left:0;top:0" width="1536" height="1493" viewBox="0 0 1536 1493" fill="none" stroke="#bdbdbd" stroke-width="1.5">
<path d="M1222.5 1389.5 C1221 1387.5 1218.5 1386.5 1216.5 1386.5 C1212.5 1386.5 1210 1389.5 1210 1393 C1210 1396 1212 1398.5 1214.5 1399.3"/>
<path d="M1217 1392.5 H1223 C1223 1396 1220.5 1398.5 1217 1399.5 Z"/><path d="M1217 1404.5 V1406 H1229.5 V1393.5 H1228"/>
<rect x="1261.5" y="1386.5" width="12.5" height="12.5"/><circle cx="1274" cy="1399.3" r="6.7" fill="none"/>
<path d="M1288 1394.2 H1295.8 L1291.9 1398.3 Z" fill="#bdbdbd" stroke="none"/>
<path d="M1332 1401.5 H1342 C1345.5 1401.5 1348 1399.5 1348 1396.5 C1348 1393.5 1345.5 1391.5 1342 1391.5 H1331.5 C1328.5 1391.5 1326.5 1393.5 1326.5 1396.2 C1326.5 1398.8 1328.5 1400.5 1331.5 1400.5"/>
<path d="M1330.5 1396.5 H1343"/>
<path d="M1392 1385.5 V1394 M1388.5 1391 L1392 1394.5 L1395.5 1391"/>
<path d="M1384 1397.5 L1392 1402 L1400 1397.5 M1384 1397.5 L1388 1394.5 M1400 1397.5 L1396 1394.5 M1384 1402.5 L1392 1407 L1400 1402.5"/>
<circle cx="1451" cy="1396" r="10.2" stroke-dasharray="3.2 2.6"/>
</svg>
<div class="t" style="left:1159.5px;width:120px;text-align:center;top:1413.5px;font-size:12.2px;line-height:12.2px;color:#c2c2c2;font-weight:400">Slice</div>

<div class="t" style="left:1217.0px;width:120px;text-align:center;top:1413.5px;font-size:12.2px;line-height:12.2px;color:#c2c2c2;font-weight:400">Combine</div>

<div class="t" style="left:1277.6px;width:120px;text-align:center;top:1413.5px;font-size:12.2px;line-height:12.2px;color:#c2c2c2;font-weight:400">Attach</div>

<div class="t" style="left:1332.0px;width:120px;text-align:center;top:1413.5px;font-size:12.2px;line-height:12.2px;color:#c2c2c2;font-weight:400">Flatten</div>

<div class="t" style="left:1391.0px;width:120px;text-align:center;top:1413.5px;font-size:12.2px;line-height:12.2px;color:#c2c2c2;font-weight:400">Contour</div>

<div class="a" style="left:1189px;top:1434px;width:345px;height:59px;background:#234dbd;border-bottom-right-radius:10px"></div>
<svg style="left:0;top:0" width="1536" height="1493" viewBox="0 0 1536 1493">
<path d="M1207.3 1450.8 H1244 L1235.3 1474.6 H1207.3 Z" fill="#53a67a"/>
<path d="M1207.3 1474.6 L1214.1 1480.7 V1474.6 Z" fill="#3f8a5f"/>
<path d="M1227.2 1468 V1462.5 C1227.2 1459.8 1225.5 1458.3 1223 1458.3 C1221 1458.3 1219.6 1459.2 1219 1460.6" fill="none" stroke="#fff" stroke-width="1.4" stroke-linecap="round"/>
<path d="M1227.2 1463.8 H1223 C1220.4 1463.8 1219 1465 1219 1466.2 C1219 1467.4 1220.4 1468.3 1222.8 1468.3 C1225.3 1468.3 1227.2 1467 1227.2 1465" fill="none" stroke="#fff" stroke-width="1.4"/>
</svg>
<div class="t" style="left:1253.0px;top:1456.9px;font-size:16.3px;line-height:16.3px;color:#fff;font-weight:400;">Want $10 off + FREE shipping?</div>
</body></html>
